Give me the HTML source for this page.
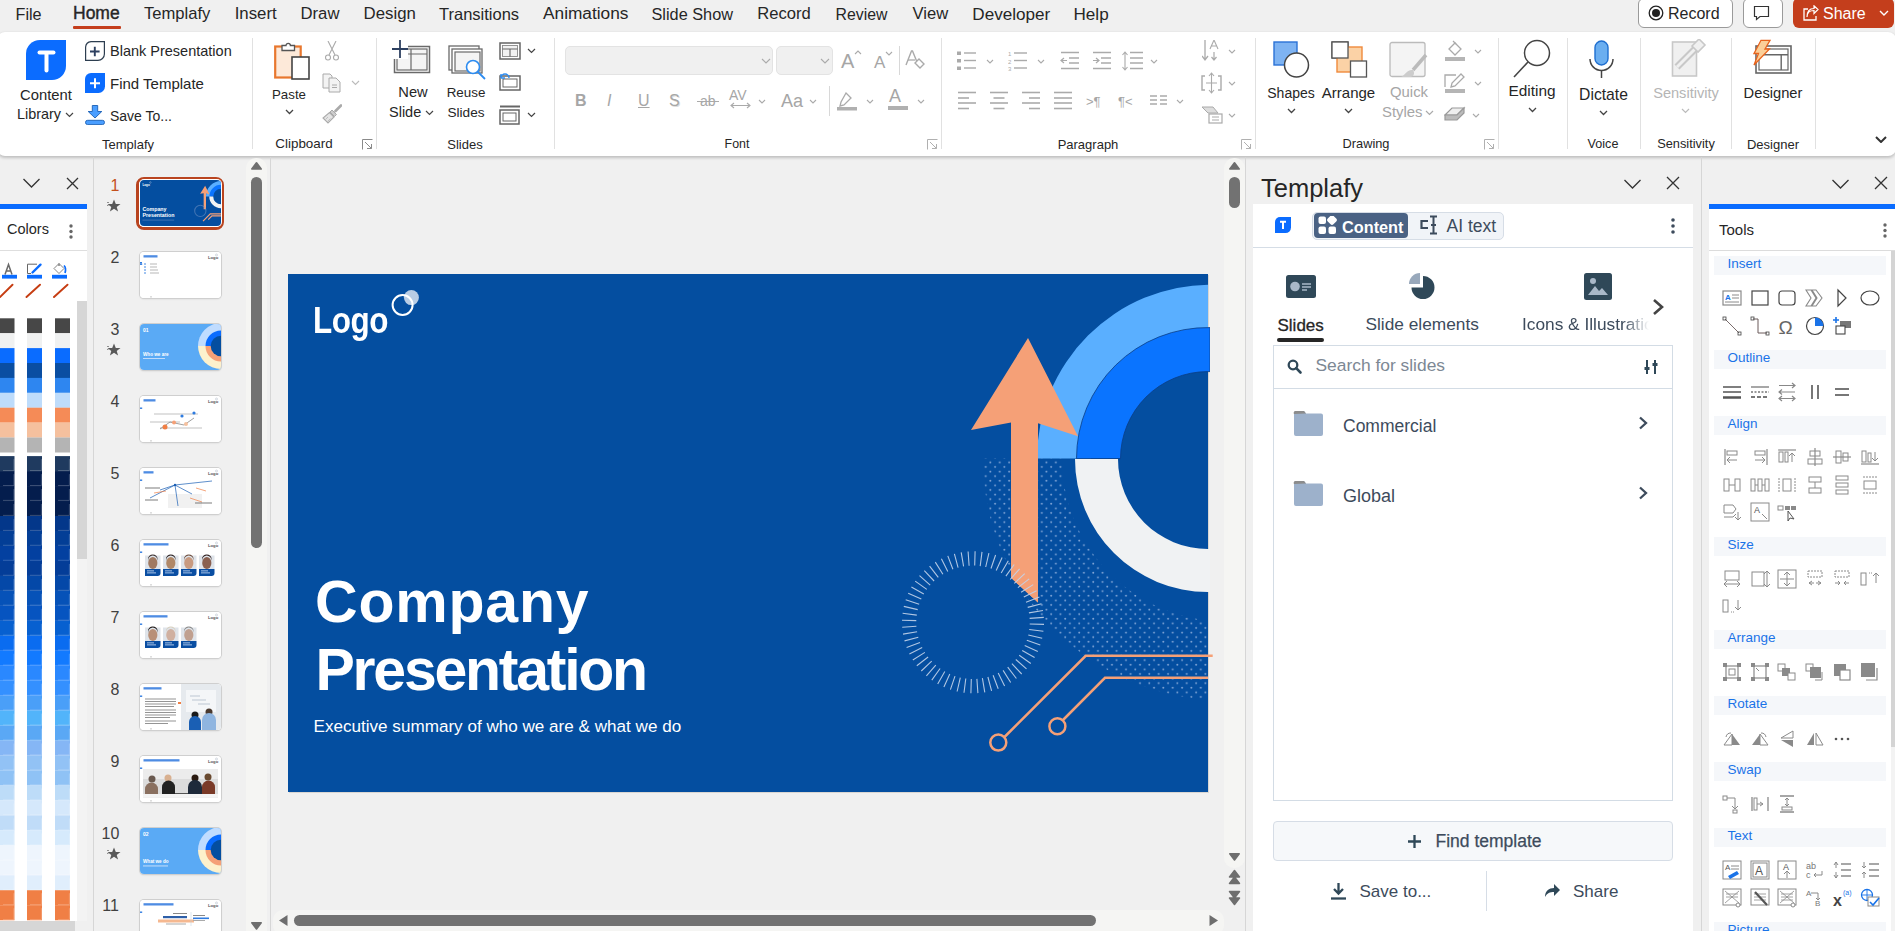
<!DOCTYPE html><html><head><meta charset="utf-8"><style>
html,body{margin:0;padding:0;width:1895px;height:931px;overflow:hidden;background:#f0f0f0;font-family:"Liberation Sans",sans-serif;}
.t{position:absolute;line-height:1;white-space:nowrap;}
#root{position:relative;width:1895px;height:931px;overflow:hidden;}
</style></head><body><div id="root">
<div class="t" style="left:15.5px;top:6.3px;font-size:16.2px;color:#262626;">File</div>
<div class="t" style="left:73.0px;top:5.2px;font-size:17.5px;color:#262626;-webkit-text-stroke:0.4px #262626;">Home</div>
<div class="t" style="left:144.0px;top:5.9px;font-size:16.6px;color:#262626;">Templafy</div>
<div class="t" style="left:234.7px;top:5.8px;font-size:16.8px;color:#262626;">Insert</div>
<div class="t" style="left:300.5px;top:5.9px;font-size:16.7px;color:#262626;">Draw</div>
<div class="t" style="left:363.6px;top:5.8px;font-size:16.8px;color:#262626;">Design</div>
<div class="t" style="left:439.0px;top:6.0px;font-size:16.5px;color:#262626;">Transitions</div>
<div class="t" style="left:543.0px;top:5.4px;font-size:17.3px;color:#262626;">Animations</div>
<div class="t" style="left:651.5px;top:6.2px;font-size:16.3px;color:#262626;">Slide Show</div>
<div class="t" style="left:757.2px;top:5.9px;font-size:16.6px;color:#262626;">Record</div>
<div class="t" style="left:835.6px;top:6.6px;font-size:15.8px;color:#262626;">Review</div>
<div class="t" style="left:912.5px;top:5.9px;font-size:16.6px;color:#262626;">View</div>
<div class="t" style="left:972.3px;top:5.5px;font-size:17.1px;color:#262626;">Developer</div>
<div class="t" style="left:1073.5px;top:5.5px;font-size:17.1px;color:#262626;">Help</div>
<div style="position:absolute;left:73px;top:26px;width:48px;height:3px;background:#c43e1c;border-radius:1px;"></div>
<div style="position:absolute;left:-3px;top:32px;width:1899px;height:124px;background:#fff;border-radius:8px;box-shadow:0 1.5px 3px rgba(0,0,0,.2);"></div>
<div style="position:absolute;left:0px;top:204px;width:87px;height:5px;background:#0a6cff;"></div>
<div style="position:absolute;left:0px;top:209px;width:87px;height:722px;background:#fff;"></div>
<div style="position:absolute;left:93px;top:157px;width:1px;height:774px;background:#d6d6d6;"></div>
<div style="position:absolute;left:246px;top:158px;width:21px;height:790px;background:#f5f5f3;border-radius:10px;"></div>
<div style="position:absolute;left:270px;top:157px;width:1px;height:774px;background:#d6d6d6;"></div>
<div style="position:absolute;left:288px;top:274px;width:920px;height:518px;background:#044ea0;"></div>
<div style="position:absolute;left:1245px;top:157px;width:1px;height:774px;background:#d6d6d6;"></div>
<div style="position:absolute;left:1253px;top:204px;width:440px;height:727px;background:#fff;"></div>
<div style="position:absolute;left:1701px;top:157px;width:1px;height:774px;background:#d6d6d6;"></div>
<div style="position:absolute;left:1709px;top:204px;width:186px;height:5px;background:#0a6cff;"></div>
<div style="position:absolute;left:1709px;top:209px;width:186px;height:722px;background:#fff;"></div>
<div class="t" style="left:1261.0px;top:175.9px;font-size:25.5px;color:#262626;">Templafy</div>
<div class="t" style="left:1719.0px;top:222.0px;font-size:15px;color:#262626;">Tools</div>
<div class="t" style="left:7.0px;top:222.3px;font-size:14.5px;color:#262626;">Colors</div>
<div style="position:absolute;left:252px;top:38px;width:1px;height:111px;background:#e1e1e1;"></div>
<div style="position:absolute;left:376px;top:38px;width:1px;height:111px;background:#e1e1e1;"></div>
<div style="position:absolute;left:554px;top:38px;width:1px;height:111px;background:#e1e1e1;"></div>
<div style="position:absolute;left:941px;top:38px;width:1px;height:111px;background:#e1e1e1;"></div>
<div style="position:absolute;left:1255px;top:38px;width:1px;height:111px;background:#e1e1e1;"></div>
<div style="position:absolute;left:1498px;top:38px;width:1px;height:111px;background:#e1e1e1;"></div>
<div style="position:absolute;left:1567px;top:38px;width:1px;height:111px;background:#e1e1e1;"></div>
<div style="position:absolute;left:1640px;top:38px;width:1px;height:111px;background:#e1e1e1;"></div>
<div style="position:absolute;left:1731px;top:38px;width:1px;height:111px;background:#e1e1e1;"></div>
<div style="position:absolute;left:1815px;top:38px;width:1px;height:111px;background:#e1e1e1;"></div>
<div class="t" style="left:128.0px;top:137.5px;font-size:13px;color:#262626;transform:translateX(-50%);">Templafy</div>
<div class="t" style="left:304.0px;top:137.2px;font-size:13.4px;color:#262626;transform:translateX(-50%);">Clipboard</div>
<div class="t" style="left:465.0px;top:137.5px;font-size:13px;color:#262626;transform:translateX(-50%);">Slides</div>
<div class="t" style="left:737.0px;top:138.0px;font-size:12.4px;color:#262626;transform:translateX(-50%);">Font</div>
<div class="t" style="left:1088.0px;top:137.5px;font-size:13px;color:#262626;transform:translateX(-50%);">Paragraph</div>
<div class="t" style="left:1366.0px;top:137.7px;font-size:12.8px;color:#262626;transform:translateX(-50%);">Drawing</div>
<div class="t" style="left:1603.0px;top:137.8px;font-size:12.6px;color:#262626;transform:translateX(-50%);">Voice</div>
<div class="t" style="left:1686.0px;top:137.7px;font-size:12.8px;color:#262626;transform:translateX(-50%);">Sensitivity</div>
<div class="t" style="left:1773.0px;top:137.5px;font-size:13px;color:#262626;transform:translateX(-50%);">Designer</div>
<svg style="position:absolute;left:362px;top:139px;" width="11" height="11" viewBox="0 0 11 11"><path d="M0.5 10.5V0.5H10.5" fill="none" stroke="#8a8a8a" stroke-width="1"/><path d="M3 3L9.5 9.5M9.5 5V9.5H5" fill="none" stroke="#8a8a8a" stroke-width="1"/></svg>
<svg style="position:absolute;left:927px;top:139px;" width="11" height="11" viewBox="0 0 11 11"><path d="M0.5 10.5V0.5H10.5" fill="none" stroke="#b0b0b0" stroke-width="1"/><path d="M3 3L9.5 9.5M9.5 5V9.5H5" fill="none" stroke="#b0b0b0" stroke-width="1"/></svg>
<svg style="position:absolute;left:1241px;top:139px;" width="11" height="11" viewBox="0 0 11 11"><path d="M0.5 10.5V0.5H10.5" fill="none" stroke="#b0b0b0" stroke-width="1"/><path d="M3 3L9.5 9.5M9.5 5V9.5H5" fill="none" stroke="#b0b0b0" stroke-width="1"/></svg>
<svg style="position:absolute;left:1484px;top:139px;" width="11" height="11" viewBox="0 0 11 11"><path d="M0.5 10.5V0.5H10.5" fill="none" stroke="#b0b0b0" stroke-width="1"/><path d="M3 3L9.5 9.5M9.5 5V9.5H5" fill="none" stroke="#b0b0b0" stroke-width="1"/></svg>
<svg style="position:absolute;left:26px;top:40px;" width="40" height="40" viewBox="0 0 40 40"><path d="M14 0H40V26A14 14 0 0 1 26 40H0V14A14 14 0 0 1 14 0Z" fill="#0b6cff"/><path d="M13.5 12.5H27.5" stroke="#fff" stroke-width="4" stroke-linecap="round"/><path d="M20.5 13V30.5" stroke="#fff" stroke-width="4" stroke-linecap="round"/></svg>
<div class="t" style="left:46.0px;top:87.5px;font-size:14.8px;color:#262626;transform:translateX(-50%);">Content</div>
<div class="t" style="left:17.0px;top:107.3px;font-size:14.4px;color:#262626;">Library</div>
<svg style="position:absolute;left:64.5px;top:112.25px;" width="9" height="5.5" viewBox="0 0 9 5.5"><polyline points="1,1 4.5,4.5 8,1" fill="none" stroke="#444" stroke-width="1.2"/></svg>
<svg style="position:absolute;left:85px;top:41px;" width="20" height="20" viewBox="0 0 20 20"><path d="M6 0.6H19.4V13A6.4 6.4 0 0 1 13 19.4H0.6V6A6 6 0 0 1 6 0.6Z" fill="#fff" stroke="#2d3e50" stroke-width="1.2"/><path d="M5 10.5H14.6M9.8 5.7V15.3" stroke="#2d4060" stroke-width="1.9"/></svg>
<div class="t" style="left:110.0px;top:44.2px;font-size:14.5px;color:#262626;">Blank Presentation</div>
<svg style="position:absolute;left:85px;top:73px;" width="20" height="20" viewBox="0 0 20 20"><path d="M6 0H20V13.5A6.5 6.5 0 0 1 13.5 20H0V6A6 6 0 0 1 6 0Z" fill="#0b6cff"/><path d="M5 10.2H15M10 5.2V15.2" stroke="#fff" stroke-width="2"/></svg>
<div class="t" style="left:110.0px;top:76.0px;font-size:15px;color:#262626;">Find Template</div>
<svg style="position:absolute;left:85px;top:105px;" width="20" height="20" viewBox="0 0 20 20"><path d="M7.3 0.5H12.7V6.5H16.8L10 13L3.2 6.5H7.3Z" fill="#4a9eff" stroke="#1a5fb4" stroke-width="0.9"/><rect x="0.5" y="15.3" width="19" height="4.3" rx="2.1" fill="#4a9eff" stroke="#1a5fb4" stroke-width="0.9"/></svg>
<div class="t" style="left:110.0px;top:108.9px;font-size:14px;color:#262626;">Save To...</div>
<svg style="position:absolute;left:274px;top:41px;" width="37" height="40" viewBox="0 0 37 40"><rect x="1.2" y="5.5" width="25.5" height="31" fill="#fde9d9" stroke="#e8772e" stroke-width="2.2"/><path d="M8 9.5V4.5H12A2.2 2.2 0 0 1 16.4 4.5H20.5V9.5Z" fill="#fff" stroke="#555" stroke-width="1.3"/><rect x="18" y="16" width="17" height="22" fill="#fff" stroke="#444" stroke-width="1.6"/></svg>
<div class="t" style="left:289.0px;top:88.2px;font-size:13.3px;color:#262626;transform:translateX(-50%);">Paste</div>
<svg style="position:absolute;left:284.5px;top:109.25px;" width="9" height="5.5" viewBox="0 0 9 5.5"><polyline points="1,1 4.5,4.5 8,1" fill="none" stroke="#444" stroke-width="1.3"/></svg>
<svg style="position:absolute;left:324px;top:41px;" width="16" height="20" viewBox="0 0 16 20"><path d="M4 0L11 14M12 0L5 14" stroke="#aaa" stroke-width="1.1" fill="none"/><circle cx="4" cy="16.5" r="2.5" fill="none" stroke="#aaa" stroke-width="1.1"/><circle cx="12" cy="16.5" r="2.5" fill="none" stroke="#aaa" stroke-width="1.1"/></svg>
<svg style="position:absolute;left:322px;top:73px;" width="20" height="20" viewBox="0 0 20 20"><path d="M1 1H8L10 3V15H1Z" fill="#f3f3f3" stroke="#aaa" stroke-width="1"/><path d="M7 5H14L18 9V19H7Z" fill="#f3f3f3" stroke="#aaa" stroke-width="1"/><path d="M10 12H15M10 14.5H15" stroke="#aaa" stroke-width="1"/></svg>
<svg style="position:absolute;left:350.5px;top:80.25px;" width="9" height="5.5" viewBox="0 0 9 5.5"><polyline points="1,1 4.5,4.5 8,1" fill="none" stroke="#bbb" stroke-width="1.1"/></svg>
<svg style="position:absolute;left:322px;top:104px;" width="20" height="20" viewBox="0 0 20 20"><path d="M19 1.5L13.5 7" stroke="#aaa" stroke-width="2.6" stroke-linecap="round"/><path d="M10 6L14.5 10.5L12.5 12.5L8 8Z" fill="#ccc" stroke="#aaa" stroke-width="1"/><path d="M7.5 8.5L12 13L6 19L1 14Z" fill="#e4e4e4" stroke="#aaa" stroke-width="1.1"/><path d="M3.5 15.5L6 13M5.5 17.5L8.5 14.5" stroke="#bbb" stroke-width="0.9"/></svg>
<svg style="position:absolute;left:392px;top:40px;" width="40" height="35" viewBox="0 0 40 35"><rect x="2.5" y="6.5" width="35" height="26" fill="#fff" stroke="#6a6a6a" stroke-width="1.5"/><rect x="5" y="9" width="30" height="21" fill="#f4f4f4" stroke="#6a6a6a" stroke-width="1.2"/><path d="M19 9V30M5 14H35" stroke="#6a6a6a" stroke-width="1.2"/><rect x="0" y="5" width="16" height="14" fill="#fff"/><path d="M8 0V18M0 9H16" stroke="#2d4060" stroke-width="1.8"/></svg>
<div class="t" style="left:413.0px;top:84.6px;font-size:14.7px;color:#262626;transform:translateX(-50%);">New</div>
<div class="t" style="left:389.0px;top:105.2px;font-size:14.5px;color:#262626;">Slide</div>
<svg style="position:absolute;left:424.5px;top:110.25px;" width="9" height="5.5" viewBox="0 0 9 5.5"><polyline points="1,1 4.5,4.5 8,1" fill="none" stroke="#444" stroke-width="1.2"/></svg>
<svg style="position:absolute;left:448px;top:45px;" width="40" height="36" viewBox="0 0 40 36"><rect x="1" y="1" width="30" height="24" fill="none" stroke="#6a6a6a" stroke-width="1.3"/><rect x="4" y="4" width="30" height="24" fill="#fff" stroke="#6a6a6a" stroke-width="1.3"/><rect x="7" y="7" width="25" height="19" fill="#f4f4f4" stroke="#6a6a6a" stroke-width="1.2"/><circle cx="25" cy="22" r="6.5" fill="#fff" stroke="#2d8cf0" stroke-width="1.6"/><path d="M29.5 26.5L37 34" stroke="#2d8cf0" stroke-width="1.8"/></svg>
<div class="t" style="left:466.0px;top:85.7px;font-size:13.4px;color:#262626;transform:translateX(-50%);">Reuse</div>
<div class="t" style="left:466.0px;top:106.0px;font-size:13.6px;color:#262626;transform:translateX(-50%);">Slides</div>
<svg style="position:absolute;left:499px;top:42px;" width="22" height="18" viewBox="0 0 22 18"><rect x="1" y="1" width="20" height="16" fill="#fff" stroke="#666" stroke-width="1.5"/><rect x="3.5" y="3.5" width="15" height="11" fill="#f2f2f2" stroke="#888" stroke-width="0.9"/><path d="M3.5 7H18.5M11 7V14.5" stroke="#666" stroke-width="1.1"/></svg>
<svg style="position:absolute;left:526.5px;top:48.25px;" width="9" height="5.5" viewBox="0 0 9 5.5"><polyline points="1,1 4.5,4.5 8,1" fill="none" stroke="#444" stroke-width="1.2"/></svg>
<svg style="position:absolute;left:499px;top:73px;" width="22" height="18" viewBox="0 0 22 18"><rect x="1" y="3" width="20" height="14" fill="#fff" stroke="#666" stroke-width="1.5"/><rect x="4" y="6" width="14" height="8" fill="#fff" stroke="#666" stroke-width="1"/><path d="M10 5A4 4 0 0 0 2 5M2 5L2 1M2 5H6" fill="none" stroke="#2d8cf0" stroke-width="1.4"/></svg>
<svg style="position:absolute;left:499px;top:105px;" width="22" height="20" viewBox="0 0 22 20"><path d="M1 1.5H21" stroke="#666" stroke-width="2"/><rect x="1" y="5" width="19" height="14" fill="#fff" stroke="#666" stroke-width="1.5"/><rect x="4" y="8" width="13" height="8" fill="#fff" stroke="#666" stroke-width="1"/></svg>
<svg style="position:absolute;left:526.5px;top:112.25px;" width="9" height="5.5" viewBox="0 0 9 5.5"><polyline points="1,1 4.5,4.5 8,1" fill="none" stroke="#444" stroke-width="1.2"/></svg>
<div style="position:absolute;left:565px;top:46px;width:208px;height:29px;background:#f0f0f0;border:1px solid #e3e3e3;border-radius:5px;box-sizing:border-box;"></div>
<div style="position:absolute;left:776px;top:46px;width:57px;height:29px;background:#f0f0f0;border:1px solid #e3e3e3;border-radius:5px;box-sizing:border-box;"></div>
<svg style="position:absolute;left:761.0px;top:58.0px;" width="10" height="6.0" viewBox="0 0 10 6.0"><polyline points="1,1 5.0,5.0 9,1" fill="none" stroke="#aaa" stroke-width="1.1"/></svg>
<svg style="position:absolute;left:820.0px;top:58.0px;" width="10" height="6.0" viewBox="0 0 10 6.0"><polyline points="1,1 5.0,5.0 9,1" fill="none" stroke="#aaa" stroke-width="1.1"/></svg>
<div class="t" style="left:841.0px;top:51.1px;font-size:20px;color:#a6a6a6;">A</div>
<svg style="position:absolute;left:854px;top:50px;" width="8" height="5" viewBox="0 0 8 5"><polyline points="1,4 4,1 7,4" fill="none" stroke="#aaa" stroke-width="1.1"/></svg>
<div class="t" style="left:874.0px;top:53.6px;font-size:17px;color:#a6a6a6;">A</div>
<svg style="position:absolute;left:885.0px;top:51.0px;" width="8" height="5.0" viewBox="0 0 8 5.0"><polyline points="1,1 4.0,4.0 7,1" fill="none" stroke="#aaa" stroke-width="1.1"/></svg>
<div style="position:absolute;left:899px;top:46px;width:1px;height:29px;background:#d8d8d8;"></div>
<svg style="position:absolute;left:905px;top:50px;" width="24" height="20" viewBox="0 0 24 20"><path d="M1 15L6.5 1H7.5L12 12" fill="none" stroke="#aaa" stroke-width="1.4"/><path d="M3 10H10" stroke="#aaa" stroke-width="1.3"/><path d="M14 9L19 14L15 18L10 13Z" fill="#fff" stroke="#aaa" stroke-width="1.4"/></svg>
<div class="t" style="left:575.0px;top:92.5px;font-size:16px;color:#a6a6a6;"><b>B</b></div>
<div class="t" style="left:607.0px;top:92.5px;font-size:16px;color:#a6a6a6;"><i>I</i></div>
<div class="t" style="left:638.0px;top:92.5px;font-size:16px;color:#a6a6a6;"><u>U</u></div>
<div class="t" style="left:669.0px;top:92.5px;font-size:16px;color:#a6a6a6;text-shadow:1px 1px 0 #ddd;">S</div>
<div class="t" style="left:700.0px;top:94.1px;font-size:14px;color:#a6a6a6;">ab</div>
<div style="position:absolute;left:697px;top:101px;width:22px;height:1px;background:#aaa;"></div>
<div class="t" style="left:729.0px;top:88.1px;font-size:14px;color:#a6a6a6;">AV</div>
<svg style="position:absolute;left:730px;top:102px;" width="21" height="7" viewBox="0 0 21 7"><path d="M1 3.5H20M4 1L1 3.5L4 6M17 1L20 3.5L17 6" fill="none" stroke="#aaa" stroke-width="1.1"/></svg>
<svg style="position:absolute;left:758.0px;top:98.5px;" width="8" height="5.0" viewBox="0 0 8 5.0"><polyline points="1,1 4.0,4.0 7,1" fill="none" stroke="#aaa" stroke-width="1.1"/></svg>
<div class="t" style="left:781.0px;top:91.8px;font-size:18px;color:#a6a6a6;">Aa</div>
<svg style="position:absolute;left:809.0px;top:98.5px;" width="8" height="5.0" viewBox="0 0 8 5.0"><polyline points="1,1 4.0,4.0 7,1" fill="none" stroke="#aaa" stroke-width="1.1"/></svg>
<div style="position:absolute;left:829px;top:86px;width:1px;height:30px;background:#d8d8d8;"></div>
<svg style="position:absolute;left:836px;top:91px;" width="22" height="20" viewBox="0 0 22 20"><path d="M10 2L15 7L8 14L4 15L5 11Z" fill="#fff" stroke="#aaa" stroke-width="1.3"/><rect x="1" y="16" width="20" height="3.5" fill="#b0b0b0"/></svg>
<svg style="position:absolute;left:866.0px;top:98.5px;" width="8" height="5.0" viewBox="0 0 8 5.0"><polyline points="1,1 4.0,4.0 7,1" fill="none" stroke="#aaa" stroke-width="1.1"/></svg>
<div class="t" style="left:889.0px;top:86.8px;font-size:18px;color:#a6a6a6;">A</div>
<div style="position:absolute;left:888px;top:106px;width:20px;height:3.5px;background:#b0b0b0;"></div>
<svg style="position:absolute;left:917.0px;top:98.5px;" width="8" height="5.0" viewBox="0 0 8 5.0"><polyline points="1,1 4.0,4.0 7,1" fill="none" stroke="#aaa" stroke-width="1.1"/></svg>
<svg style="position:absolute;left:957px;top:51px;" width="22" height="20" viewBox="0 0 22 20"><rect x="0" y="0.5" width="4" height="3.5" fill="#aaa"/><path d="M7 2H19" stroke="#aaa" stroke-width="1.4"/><rect x="0" y="8.0" width="4" height="3.5" fill="#aaa"/><path d="M7 9.5H19" stroke="#aaa" stroke-width="1.4"/><rect x="0" y="15.5" width="4" height="3.5" fill="#aaa"/><path d="M7 17H19" stroke="#aaa" stroke-width="1.4"/></svg>
<svg style="position:absolute;left:986.0px;top:58.5px;" width="8" height="5.0" viewBox="0 0 8 5.0"><polyline points="1,1 4.0,4.0 7,1" fill="none" stroke="#aaa" stroke-width="1.1"/></svg>
<svg style="position:absolute;left:1008px;top:51px;" width="22" height="20" viewBox="0 0 22 20"><text x="0" y="5" font-size="6" fill="#aaa" font-family="Liberation Sans">1</text><path d="M6 2H19" stroke="#aaa" stroke-width="1.4"/><text x="0" y="12.5" font-size="6" fill="#aaa" font-family="Liberation Sans">2</text><path d="M6 9.5H19" stroke="#aaa" stroke-width="1.4"/><text x="0" y="20" font-size="6" fill="#aaa" font-family="Liberation Sans">3</text><path d="M6 17H19" stroke="#aaa" stroke-width="1.4"/></svg>
<svg style="position:absolute;left:1037.0px;top:58.5px;" width="8" height="5.0" viewBox="0 0 8 5.0"><polyline points="1,1 4.0,4.0 7,1" fill="none" stroke="#aaa" stroke-width="1.1"/></svg>
<svg style="position:absolute;left:1060px;top:51px;" width="22" height="20" viewBox="0 0 22 20"><path d="M1 1.5H19M9 7H19M9 12H19M1 17.5H19" stroke="#aaa" stroke-width="1.4"/><path d="M7 9.5H1M4 7L1 9.5L4 12" fill="none" stroke="#aaa" stroke-width="1.2"/></svg>
<svg style="position:absolute;left:1092px;top:51px;" width="22" height="20" viewBox="0 0 22 20"><path d="M1 1.5H19M9 7H19M9 12H19M1 17.5H19" stroke="#aaa" stroke-width="1.4"/><path d="M1 9.5H7M4 7L7 9.5L4 12" fill="none" stroke="#aaa" stroke-width="1.2"/></svg>
<svg style="position:absolute;left:1122px;top:51px;" width="22" height="20" viewBox="0 0 22 20"><path d="M8 1.5H21M8 7H21M8 12H21M8 17.5H21" stroke="#aaa" stroke-width="1.4"/><path d="M3 1V19M0.5 4L3 1L5.5 4M0.5 16L3 19L5.5 16" fill="none" stroke="#aaa" stroke-width="1.1"/></svg>
<svg style="position:absolute;left:1150.0px;top:58.5px;" width="8" height="5.0" viewBox="0 0 8 5.0"><polyline points="1,1 4.0,4.0 7,1" fill="none" stroke="#aaa" stroke-width="1.1"/></svg>
<svg style="position:absolute;left:958px;top:91px;" width="22" height="20" viewBox="0 0 22 20"><path d="M0 1.5H18" stroke="#aaa" stroke-width="1.6"/><path d="M0 7H11" stroke="#aaa" stroke-width="1.6"/><path d="M0 12H18" stroke="#aaa" stroke-width="1.6"/><path d="M0 17.5H11" stroke="#aaa" stroke-width="1.6"/></svg>
<svg style="position:absolute;left:990px;top:91px;" width="22" height="20" viewBox="0 0 22 20"><path d="M0 1.5H18" stroke="#aaa" stroke-width="1.6"/><path d="M3.5 7H14.5" stroke="#aaa" stroke-width="1.6"/><path d="M0 12H18" stroke="#aaa" stroke-width="1.6"/><path d="M3.5 17.5H14.5" stroke="#aaa" stroke-width="1.6"/></svg>
<svg style="position:absolute;left:1022px;top:91px;" width="22" height="20" viewBox="0 0 22 20"><path d="M0 1.5H18" stroke="#aaa" stroke-width="1.6"/><path d="M7 7H18" stroke="#aaa" stroke-width="1.6"/><path d="M0 12H18" stroke="#aaa" stroke-width="1.6"/><path d="M7 17.5H18" stroke="#aaa" stroke-width="1.6"/></svg>
<svg style="position:absolute;left:1054px;top:91px;" width="22" height="20" viewBox="0 0 22 20"><path d="M0 1.5H18" stroke="#aaa" stroke-width="1.6"/><path d="M0 7H18" stroke="#aaa" stroke-width="1.6"/><path d="M0 12H18" stroke="#aaa" stroke-width="1.6"/><path d="M0 17.5H18" stroke="#aaa" stroke-width="1.6"/></svg>
<div class="t" style="left:1086.0px;top:95.0px;font-size:13px;color:#a6a6a6;">&gt;¶</div>
<div class="t" style="left:1118.0px;top:95.0px;font-size:13px;color:#a6a6a6;">¶&lt;</div>
<svg style="position:absolute;left:1150px;top:95px;" width="18" height="10" viewBox="0 0 18 10"><path d="M0 1H7M0 5H7M0 9H7M10 1H17M10 5H17M10 9H17" stroke="#aaa" stroke-width="1.4"/></svg>
<svg style="position:absolute;left:1176.0px;top:98.5px;" width="8" height="5.0" viewBox="0 0 8 5.0"><polyline points="1,1 4.0,4.0 7,1" fill="none" stroke="#aaa" stroke-width="1.1"/></svg>
<svg style="position:absolute;left:1202px;top:40px;" width="20" height="22" viewBox="0 0 20 22"><path d="M3 0V20M0 16L3 20L6 16" fill="none" stroke="#aaa" stroke-width="1.3"/><path d="M12 12V20M9.5 17L12 20L14.5 17" fill="none" stroke="#aaa" stroke-width="1.2"/><path d="M8 9L12 0L16 9M9.5 6H14.5" fill="none" stroke="#aaa" stroke-width="1.1"/></svg>
<svg style="position:absolute;left:1228.0px;top:48.5px;" width="8" height="5.0" viewBox="0 0 8 5.0"><polyline points="1,1 4.0,4.0 7,1" fill="none" stroke="#aaa" stroke-width="1.1"/></svg>
<svg style="position:absolute;left:1201px;top:72px;" width="21" height="22" viewBox="0 0 21 22"><path d="M4 4H1V18H4M17 4H20V18H17" fill="none" stroke="#aaa" stroke-width="1.4"/><path d="M10.5 1V21M8 4L10.5 1L13 4M8 18L10.5 21L13 18M5 11H16" fill="none" stroke="#aaa" stroke-width="1.1"/></svg>
<svg style="position:absolute;left:1228.0px;top:80.5px;" width="8" height="5.0" viewBox="0 0 8 5.0"><polyline points="1,1 4.0,4.0 7,1" fill="none" stroke="#aaa" stroke-width="1.1"/></svg>
<svg style="position:absolute;left:1201px;top:106px;" width="22" height="18" viewBox="0 0 22 18"><path d="M1 1H12L17 7H7Z" fill="#ddd" stroke="#aaa" stroke-width="1"/><rect x="8" y="8" width="13" height="9" fill="#fff" stroke="#aaa" stroke-width="1.2"/><path d="M11 11H18M11 14H18" stroke="#aaa" stroke-width="1"/></svg>
<svg style="position:absolute;left:1228.0px;top:112.5px;" width="8" height="5.0" viewBox="0 0 8 5.0"><polyline points="1,1 4.0,4.0 7,1" fill="none" stroke="#aaa" stroke-width="1.1"/></svg>
<svg style="position:absolute;left:1273px;top:41px;" width="37" height="38" viewBox="0 0 37 38"><rect x="1" y="1" width="23" height="23" fill="#7eb3f2" stroke="#2b72d6" stroke-width="1.4"/><circle cx="23.5" cy="24" r="12" fill="#fff" stroke="#444" stroke-width="1.5"/></svg>
<div class="t" style="left:1291.0px;top:86.1px;font-size:14px;color:#262626;transform:translateX(-50%);">Shapes</div>
<svg style="position:absolute;left:1286.5px;top:108.25px;" width="9" height="5.5" viewBox="0 0 9 5.5"><polyline points="1,1 4.5,4.5 8,1" fill="none" stroke="#444" stroke-width="1.3"/></svg>
<svg style="position:absolute;left:1331px;top:41px;" width="37" height="38" viewBox="0 0 37 38"><rect x="1" y="1" width="16" height="16" fill="#fff" stroke="#555" stroke-width="1.3"/><rect x="6" y="6" width="25" height="25" fill="#fbd2a6" stroke="#f08a3c" stroke-width="1.4"/><rect x="1" y="1" width="16" height="16" fill="#fff" stroke="#555" stroke-width="1.3"/><rect x="19.5" y="20" width="16" height="16" fill="#fff" stroke="#555" stroke-width="1.3"/></svg>
<div class="t" style="left:1348.5px;top:85.3px;font-size:15px;color:#262626;transform:translateX(-50%);">Arrange</div>
<svg style="position:absolute;left:1343.5px;top:108.25px;" width="9" height="5.5" viewBox="0 0 9 5.5"><polyline points="1,1 4.5,4.5 8,1" fill="none" stroke="#444" stroke-width="1.3"/></svg>
<svg style="position:absolute;left:1389px;top:41px;" width="40" height="38" viewBox="0 0 40 38"><rect x="1" y="1.5" width="35" height="34" rx="2" fill="#f4f4f4" stroke="#bbb" stroke-width="1.3"/><path d="M37 14L24 29" stroke="#bbb" stroke-width="3.5"/><path d="M22 29C17 30 16 34 12 36H22C25 35 26 32 24 29Z" fill="#ccc"/></svg>
<div class="t" style="left:1409.0px;top:85.4px;font-size:14.9px;color:#a6a6a6;transform:translateX(-50%);">Quick</div>
<div class="t" style="left:1382.0px;top:105.4px;font-size:14.9px;color:#a6a6a6;">Styles</div>
<svg style="position:absolute;left:1424.5px;top:110.25px;" width="9" height="5.5" viewBox="0 0 9 5.5"><polyline points="1,1 4.5,4.5 8,1" fill="none" stroke="#aaa" stroke-width="1.2"/></svg>
<svg style="position:absolute;left:1444px;top:40px;" width="22" height="22" viewBox="0 0 22 22"><path d="M5 9L11 3L17 9L11 15Z" fill="#fff" stroke="#aaa" stroke-width="1.3"/><path d="M9 1L12 4" stroke="#aaa" stroke-width="1.3"/><rect x="1" y="17" width="20" height="4" fill="#b5b5b5"/></svg>
<svg style="position:absolute;left:1474.0px;top:48.5px;" width="8" height="5.0" viewBox="0 0 8 5.0"><polyline points="1,1 4.0,4.0 7,1" fill="none" stroke="#aaa" stroke-width="1.1"/></svg>
<svg style="position:absolute;left:1444px;top:72px;" width="22" height="22" viewBox="0 0 22 22"><path d="M1 15V3H12" fill="none" stroke="#aaa" stroke-width="1.3"/><path d="M17 2L20 5L11 14L7 15L8 11Z" fill="#fff" stroke="#aaa" stroke-width="1.3"/><rect x="1" y="17" width="20" height="4" fill="#b5b5b5"/></svg>
<svg style="position:absolute;left:1474.0px;top:80.5px;" width="8" height="5.0" viewBox="0 0 8 5.0"><polyline points="1,1 4.0,4.0 7,1" fill="none" stroke="#aaa" stroke-width="1.1"/></svg>
<svg style="position:absolute;left:1444px;top:105px;" width="22" height="18" viewBox="0 0 22 18"><path d="M1 10L8 3H20L13 10Z" fill="#eee" stroke="#999" stroke-width="1.2"/><path d="M1 10V15H13L20 8V3L13 10Z" fill="#bbb" stroke="#999" stroke-width="1.2"/></svg>
<svg style="position:absolute;left:1472.0px;top:112.5px;" width="8" height="5.0" viewBox="0 0 8 5.0"><polyline points="1,1 4.0,4.0 7,1" fill="none" stroke="#aaa" stroke-width="1.1"/></svg>
<svg style="position:absolute;left:1512px;top:39px;" width="40" height="40" viewBox="0 0 40 40"><circle cx="25" cy="14" r="12.5" fill="#fff" stroke="#444" stroke-width="1.5"/><path d="M16 23L2 38" stroke="#444" stroke-width="1.6"/></svg>
<div class="t" style="left:1532.0px;top:83.0px;font-size:15.4px;color:#262626;transform:translateX(-50%);">Editing</div>
<svg style="position:absolute;left:1527.5px;top:107.25px;" width="9" height="5.5" viewBox="0 0 9 5.5"><polyline points="1,1 4.5,4.5 8,1" fill="none" stroke="#444" stroke-width="1.3"/></svg>
<svg style="position:absolute;left:1588px;top:40px;" width="28" height="40" viewBox="0 0 28 40"><rect x="7" y="1" width="13" height="24" rx="6.5" fill="#6aaef0" stroke="#1f6fd0" stroke-width="1.4"/><path d="M2 19A11.5 11.5 0 0 0 25 19" fill="none" stroke="#444" stroke-width="1.5"/><path d="M13.5 30.5V38" stroke="#444" stroke-width="1.5"/></svg>
<div class="t" style="left:1603.5px;top:86.7px;font-size:15.7px;color:#262626;transform:translateX(-50%);">Dictate</div>
<svg style="position:absolute;left:1598.5px;top:110.25px;" width="9" height="5.5" viewBox="0 0 9 5.5"><polyline points="1,1 4.5,4.5 8,1" fill="none" stroke="#444" stroke-width="1.3"/></svg>
<svg style="position:absolute;left:1671px;top:39px;" width="36" height="40" viewBox="0 0 36 40"><path d="M1 3H12V36H1Z" fill="#f0f0f0"/><rect x="1.5" y="3" width="24" height="34" fill="#f0f0f0" stroke="#c8c8c8" stroke-width="1.6"/><path d="M6 28L24 10" stroke="#c8c8c8" stroke-width="7"/><path d="M6 28L24 10" stroke="#f0f0f0" stroke-width="3"/><path d="M21 7L28 0L34 6L27 13Z" fill="#f0f0f0" stroke="#c8c8c8" stroke-width="1.6"/></svg>
<div class="t" style="left:1686.0px;top:85.6px;font-size:14.6px;color:#b5b5b5;transform:translateX(-50%);">Sensitivity</div>
<svg style="position:absolute;left:1680.5px;top:108.25px;" width="9" height="5.5" viewBox="0 0 9 5.5"><polyline points="1,1 4.5,4.5 8,1" fill="none" stroke="#bbb" stroke-width="1.2"/></svg>
<svg style="position:absolute;left:1753px;top:39px;" width="40" height="36" viewBox="0 0 40 36"><rect x="3" y="7" width="35" height="27" fill="#fff" stroke="#666" stroke-width="1.6"/><rect x="6" y="10" width="29" height="21" fill="#fff" stroke="#666" stroke-width="1.2"/><path d="M6 15.8H35M28.2 15.8V31" stroke="#666" stroke-width="1.4"/><path d="M8 1.3H17L12 10H16.5L1 26L5.5 14.5H1Z" fill="#fbcf98" stroke="#e8631c" stroke-width="1.3"/></svg>
<div class="t" style="left:1773.0px;top:85.6px;font-size:14.7px;color:#262626;transform:translateX(-50%);">Designer</div>
<svg style="position:absolute;left:1875.0px;top:135.5px;" width="12" height="7.0" viewBox="0 0 12 7.0"><polyline points="1,1 6.0,6.0 11,1" fill="none" stroke="#333" stroke-width="2"/></svg>
<div style="position:absolute;left:1638px;top:-2px;width:95px;height:29.5px;background:#fff;border:1px solid #9a9a9a;border-radius:6px;box-sizing:border-box;"></div>
<svg style="position:absolute;left:1648px;top:5px;" width="16" height="16" viewBox="0 0 16 16"><circle cx="8" cy="8" r="6.8" fill="#fff" stroke="#222" stroke-width="1.3"/><circle cx="8" cy="8" r="4" fill="#222"/></svg>
<div class="t" style="left:1668.0px;top:6.0px;font-size:16px;color:#262626;">Record</div>
<div style="position:absolute;left:1743px;top:-2px;width:40px;height:29.5px;background:#fff;border:1px solid #9a9a9a;border-radius:6px;box-sizing:border-box;"></div>
<svg style="position:absolute;left:1753px;top:5px;" width="18" height="16" viewBox="0 0 18 16"><path d="M1.5 1.5H15.5V11.5H7L3.5 14.5V11.5H1.5Z" fill="none" stroke="#333" stroke-width="1.2"/></svg>
<div style="position:absolute;left:1793px;top:-2px;width:101px;height:29.5px;background:#c43e1c;border-radius:6px;"></div>
<svg style="position:absolute;left:1802px;top:5px;" width="17" height="16" viewBox="0 0 17 16"><path d="M6 4H2V15H14V11" fill="none" stroke="#fff" stroke-width="1.3"/><path d="M5 12C5 7 8 5.5 12 5.5V8.5L16 4.5L12 0.8V3.5C7 3.5 5 7 5 12Z" fill="none" stroke="#fff" stroke-width="1.2"/></svg>
<div class="t" style="left:1823.0px;top:6.0px;font-size:16px;color:#fff;">Share</div>
<svg style="position:absolute;left:1879.0px;top:10.0px;" width="10" height="6.0" viewBox="0 0 10 6.0"><polyline points="1,1 5.0,5.0 9,1" fill="none" stroke="#fff" stroke-width="1.4"/></svg>
<div style="position:absolute;left:289px;top:275px;width:920px;height:518px;background:#d9d6d2;"></div>
<svg style="position:absolute;left:288px;top:274px;" width="926" height="518" viewBox="0 0 926 518">
<defs>
<pattern id="dots" x="0" y="0" width="9.35" height="9.2" patternUnits="userSpaceOnUse">
<circle cx="1.15" cy="4.3" r="0.95" fill="#9ab6e0"/><circle cx="5.825" cy="8.9" r="0.95" fill="#9ab6e0"/><circle cx="5.825" cy="-0.3" r="0.95" fill="#9ab6e0"/>
</pattern>
<clipPath id="sclip"><rect x="0" y="0" width="920" height="518"/></clipPath><clipPath id="sclip2"><rect x="0" y="0" width="922" height="518"/></clipPath>
</defs>
<rect x="0" y="0" width="920" height="518" fill="#044ea0"/>
<g clip-path="url(#sclip)">
<path d="M695 184.5A242 242 0 0 0 937 426.5L937 347.5A163 163 0 0 1 774 184.5Z" fill="url(#dots)" opacity="0.85"/>
<path d="M749 184.6A174 174 0 0 1 923 10.599999999999994L923 64.6A120 120 0 0 0 803 184.6Z" fill="#5aafff"/>
<path d="M723 328.6V148.6L683 156L740 64L790 162.3L750 149.3V328.6L723 303.8Z" fill="#f5a077"/>
</g><g clip-path="url(#sclip2)">
<path d="M788.5 184.6A131 131 0 0 1 922 53.6V97.6H919.5A87 87 0 0 0 832.5 184.6Z" fill="#0a74ff" stroke="#0a3d85" stroke-width="0.8"/>
<path d="M787 185A133 133 0 0 0 920 318H922V275H920A90 90 0 0 1 830 185Z" fill="#f0f2f3"/>
</g><g clip-path="url(#sclip)">
<path d="M723 303.8L750 328.6V290H723Z" fill="#f5a077"/>
</g>
<path d="M741.7 350.0L756.0 350.4M741.2 355.5L755.4 357.3M740.3 361.0L754.2 364.2M738.8 366.3L752.3 370.9M736.7 371.5L749.8 377.4M734.2 376.5L746.6 383.6M731.2 381.2L742.8 389.5M727.8 385.5L738.5 394.9M723.9 389.6L733.7 400.0M719.7 393.2L728.4 404.5M715.1 396.4L722.7 408.5M710.2 399.1L716.6 411.9M705.1 401.3L710.2 414.7M699.9 403.0L703.6 416.8M694.4 404.2L696.8 418.3M688.9 404.9L689.9 419.1M683.3 405.0L682.9 419.3M677.8 404.5L676.0 418.7M672.3 403.6L669.1 417.5M667.0 402.1L662.4 415.6M661.8 400.0L655.9 413.1M656.8 397.5L649.7 409.9M652.1 394.5L643.8 406.1M647.8 391.1L638.4 401.8M643.7 387.2L633.3 397.0M640.1 383.0L628.8 391.7M636.9 378.4L624.8 386.0M634.2 373.5L621.4 379.9M632.0 368.4L618.6 373.5M630.3 363.2L616.5 366.9M629.1 357.7L615.0 360.1M628.4 352.2L614.2 353.2M628.3 346.6L614.0 346.2M628.8 341.1L614.6 339.3M629.7 335.6L615.8 332.4M631.2 330.3L617.7 325.7M633.3 325.1L620.2 319.2M635.8 320.1L623.4 313.0M638.8 315.4L627.2 307.1M642.2 311.1L631.5 301.7M646.1 307.0L636.3 296.6M650.3 303.4L641.6 292.1M654.9 300.2L647.3 288.1M659.8 297.5L653.4 284.7M664.9 295.3L659.8 281.9M670.1 293.6L666.4 279.8M675.6 292.4L673.2 278.3M681.1 291.7L680.1 277.5M686.7 291.6L687.1 277.3M692.2 292.1L694.0 277.9M697.7 293.0L700.9 279.1M703.0 294.5L707.6 281.0M708.2 296.6L714.1 283.5M713.2 299.1L720.3 286.7M717.9 302.1L726.2 290.5M722.2 305.5L731.6 294.8M726.3 309.4L736.7 299.6M729.9 313.6L741.2 304.9M733.1 318.2L745.2 310.6M735.8 323.1L748.6 316.7M738.0 328.2L751.4 323.1M739.7 333.4L753.5 329.7M740.9 338.9L755.0 336.5M741.6 344.4L755.8 343.4" stroke="#c3d3ea" stroke-width="1.1" opacity="0.9"/>
<path d="M924.7 381.8H797.7L716 463.5" fill="none" stroke="#f5a077" stroke-width="2.5"/>
<circle cx="710.3" cy="468.6" r="8" fill="none" stroke="#f5a077" stroke-width="2.5"/>
<path d="M920 403.8H817L775 446" fill="none" stroke="#f5a077" stroke-width="2.5"/>
<circle cx="769.4" cy="452.3" r="8" fill="none" stroke="#f5a077" stroke-width="2.5"/>
<circle cx="114.6" cy="31" r="10" fill="none" stroke="#fff" stroke-width="2"/>
<circle cx="123.4" cy="23.6" r="7.5" fill="#fff" opacity="0.72"/>
</svg>
<div class="t" style="left:313.0px;top:302.7px;font-size:36.5px;color:#fff;font-weight:700;transform:scaleX(0.86);transform-origin:0 0;letter-spacing:-0.5px;">Logo</div>
<div class="t" style="left:315.0px;top:572.6px;font-size:59px;color:#fff;font-weight:700;letter-spacing:0.8px;">Company</div>
<div class="t" style="left:315.5px;top:641.1px;font-size:59px;color:#fff;font-weight:700;letter-spacing:-2.25px;">Presentation</div>
<div class="t" style="left:313.5px;top:717.5px;font-size:17.1px;color:#fff;">Executive summary of who we are &amp; what we do</div>
<svg style="position:absolute;left:23px;top:178px;" width="17" height="11" viewBox="0 0 17 11"><polyline points="0.5,1 8.5,9 16.5,1" fill="none" stroke="#333" stroke-width="1.3"/></svg>
<svg style="position:absolute;left:65.5px;top:177px;" width="13" height="13" viewBox="0 0 13 13"><path d="M1 1L12 12M12 1L1 12" stroke="#333" stroke-width="1.3"/></svg>
<svg style="position:absolute;left:68px;top:223.5px;" width="6" height="16" viewBox="0 0 6 16"><circle cx="3" cy="2.0" r="1.7" fill="#666"/><circle cx="3" cy="7.5" r="1.7" fill="#666"/><circle cx="3" cy="13.0" r="1.7" fill="#666"/></svg>
<div style="position:absolute;left:0px;top:250px;width:87px;height:1px;background:#dedede;"></div>
<svg style="position:absolute;left:0px;top:262px;" width="87" height="36" viewBox="0 0 87 36">
<path d="M5 12.5L8.5 2.5L12 12.5M6.2 9H10.8" fill="none" stroke="#6a6a6a" stroke-width="1.5"/>
<rect x="2" y="12.8" width="15" height="3.8" fill="#0a6cff"/>
<path d="M37 2.2H27.5V11.5H31" fill="none" stroke="#666" stroke-width="1"/><path d="M32.5 10.5L40.5 2.7" stroke="#0a6cff" stroke-width="2.4" stroke-linecap="round"/>
<rect x="27" y="12.8" width="15" height="3.8" fill="#0a6cff"/>
<path d="M54 6.5L59 1.5L64 6.5L59 11.5Z" fill="#fff" stroke="#777" stroke-width="0.9"/><path d="M59 1.5V4" stroke="#888" stroke-width="1.6"/><path d="M64 3.5Q66.5 6 65 11" fill="none" stroke="#0a6cff" stroke-width="1.7"/>
<rect x="52" y="12.8" width="15" height="3.8" fill="#0a6cff"/>
<path d="M0 35L12.5 22.7M26.5 35L40 22.7M54 35L67.5 22.7" stroke="#c63d12" stroke-width="1.9" stroke-linecap="round"/>
</svg>
<svg style="position:absolute;left:0px;top:318px;" width="75" height="603" viewBox="0 0 75 603"><rect x="0" y="0.30" width="14.5" height="15.00" fill="#474747"/><rect x="27" y="0.30" width="15" height="15.00" fill="#474747"/><rect x="55" y="0.30" width="15" height="15.00" fill="#474747"/><rect x="0" y="15.20" width="14.5" height="15.00" fill="#f0f1f1"/><rect x="27" y="15.20" width="15" height="15.00" fill="#f0f1f1"/><rect x="55" y="15.20" width="15" height="15.00" fill="#f0f1f1"/><rect x="0" y="30.10" width="14.5" height="15.00" fill="#0a6cff"/><rect x="27" y="30.10" width="15" height="15.00" fill="#0a6cff"/><rect x="55" y="30.10" width="15" height="15.00" fill="#0a6cff"/><rect x="0" y="45.00" width="14.5" height="15.00" fill="#0a4ea2"/><rect x="27" y="45.00" width="15" height="15.00" fill="#0a4ea2"/><rect x="55" y="45.00" width="15" height="15.00" fill="#0a4ea2"/><rect x="0" y="59.90" width="14.5" height="15.00" fill="#2e86f0"/><rect x="27" y="59.90" width="15" height="15.00" fill="#2e86f0"/><rect x="55" y="59.90" width="15" height="15.00" fill="#2e86f0"/><rect x="0" y="74.80" width="14.5" height="15.00" fill="#bedcfb"/><rect x="27" y="74.80" width="15" height="15.00" fill="#bedcfb"/><rect x="55" y="74.80" width="15" height="15.00" fill="#bedcfb"/><rect x="0" y="89.70" width="14.5" height="15.00" fill="#f58b57"/><rect x="27" y="89.70" width="15" height="15.00" fill="#f58b57"/><rect x="55" y="89.70" width="15" height="15.00" fill="#f58b57"/><rect x="0" y="104.60" width="14.5" height="15.00" fill="#f5c09e"/><rect x="27" y="104.60" width="15" height="15.00" fill="#f5c09e"/><rect x="55" y="104.60" width="15" height="15.00" fill="#f5c09e"/><rect x="0" y="119.50" width="14.5" height="15.00" fill="#b4b4b4"/><rect x="27" y="119.50" width="15" height="15.00" fill="#b4b4b4"/><rect x="55" y="119.50" width="15" height="15.00" fill="#b4b4b4"/><rect x="0" y="138.10" width="14.5" height="15.07" fill="#1f3a5f"/><path d="M3 152.5H13.9V141.1" fill="none" stroke="#ffffff" stroke-opacity="0.28" stroke-width="0.8"/><rect x="27" y="138.10" width="15" height="15.07" fill="#1f3a5f"/><path d="M30 152.5H41.4V141.1" fill="none" stroke="#ffffff" stroke-opacity="0.28" stroke-width="0.8"/><rect x="55" y="138.10" width="15" height="15.07" fill="#1f3a5f"/><path d="M58 152.5H69.4V141.1" fill="none" stroke="#ffffff" stroke-opacity="0.28" stroke-width="0.8"/><rect x="0" y="153.07" width="14.5" height="15.07" fill="#041d4d"/><path d="M3 167.5H13.9V156.1" fill="none" stroke="#ffffff" stroke-opacity="0.28" stroke-width="0.8"/><rect x="27" y="153.07" width="15" height="15.07" fill="#041d4d"/><path d="M30 167.5H41.4V156.1" fill="none" stroke="#ffffff" stroke-opacity="0.28" stroke-width="0.8"/><rect x="55" y="153.07" width="15" height="15.07" fill="#041d4d"/><path d="M58 167.5H69.4V156.1" fill="none" stroke="#ffffff" stroke-opacity="0.28" stroke-width="0.8"/><rect x="0" y="168.04" width="14.5" height="15.07" fill="#041d4d"/><path d="M3 182.4H13.9V171.0" fill="none" stroke="#ffffff" stroke-opacity="0.28" stroke-width="0.8"/><rect x="27" y="168.04" width="15" height="15.07" fill="#041d4d"/><path d="M30 182.4H41.4V171.0" fill="none" stroke="#ffffff" stroke-opacity="0.28" stroke-width="0.8"/><rect x="55" y="168.04" width="15" height="15.07" fill="#041d4d"/><path d="M58 182.4H69.4V171.0" fill="none" stroke="#ffffff" stroke-opacity="0.28" stroke-width="0.8"/><rect x="0" y="183.01" width="14.5" height="15.07" fill="#041d4d"/><path d="M3 197.4H13.9V186.0" fill="none" stroke="#ffffff" stroke-opacity="0.28" stroke-width="0.8"/><rect x="27" y="183.01" width="15" height="15.07" fill="#041d4d"/><path d="M30 197.4H41.4V186.0" fill="none" stroke="#ffffff" stroke-opacity="0.28" stroke-width="0.8"/><rect x="55" y="183.01" width="15" height="15.07" fill="#041d4d"/><path d="M58 197.4H69.4V186.0" fill="none" stroke="#ffffff" stroke-opacity="0.28" stroke-width="0.8"/><rect x="0" y="197.98" width="14.5" height="15.07" fill="#03378a"/><path d="M3 212.4H13.9V201.0" fill="none" stroke="#ffffff" stroke-opacity="0.28" stroke-width="0.8"/><rect x="27" y="197.98" width="15" height="15.07" fill="#03378a"/><path d="M30 212.4H41.4V201.0" fill="none" stroke="#ffffff" stroke-opacity="0.28" stroke-width="0.8"/><rect x="55" y="197.98" width="15" height="15.07" fill="#03378a"/><path d="M58 212.4H69.4V201.0" fill="none" stroke="#ffffff" stroke-opacity="0.28" stroke-width="0.8"/><rect x="0" y="212.95" width="14.5" height="15.07" fill="#033e96"/><path d="M3 227.3H13.9V215.9" fill="none" stroke="#ffffff" stroke-opacity="0.28" stroke-width="0.8"/><rect x="27" y="212.95" width="15" height="15.07" fill="#033e96"/><path d="M30 227.3H41.4V215.9" fill="none" stroke="#ffffff" stroke-opacity="0.28" stroke-width="0.8"/><rect x="55" y="212.95" width="15" height="15.07" fill="#033e96"/><path d="M58 227.3H69.4V215.9" fill="none" stroke="#ffffff" stroke-opacity="0.28" stroke-width="0.8"/><rect x="0" y="227.92" width="14.5" height="15.07" fill="#0340a0"/><path d="M3 242.3H13.9V230.9" fill="none" stroke="#ffffff" stroke-opacity="0.28" stroke-width="0.8"/><rect x="27" y="227.92" width="15" height="15.07" fill="#0340a0"/><path d="M30 242.3H41.4V230.9" fill="none" stroke="#ffffff" stroke-opacity="0.28" stroke-width="0.8"/><rect x="55" y="227.92" width="15" height="15.07" fill="#0340a0"/><path d="M58 242.3H69.4V230.9" fill="none" stroke="#ffffff" stroke-opacity="0.28" stroke-width="0.8"/><rect x="0" y="242.89" width="14.5" height="15.07" fill="#043d98"/><path d="M3 257.3H13.9V245.9" fill="none" stroke="#ffffff" stroke-opacity="0.28" stroke-width="0.8"/><rect x="27" y="242.89" width="15" height="15.07" fill="#043d98"/><path d="M30 257.3H41.4V245.9" fill="none" stroke="#ffffff" stroke-opacity="0.28" stroke-width="0.8"/><rect x="55" y="242.89" width="15" height="15.07" fill="#043d98"/><path d="M58 257.3H69.4V245.9" fill="none" stroke="#ffffff" stroke-opacity="0.28" stroke-width="0.8"/><rect x="0" y="257.86" width="14.5" height="15.07" fill="#0448a8"/><path d="M3 272.3H13.9V260.9" fill="none" stroke="#ffffff" stroke-opacity="0.28" stroke-width="0.8"/><rect x="27" y="257.86" width="15" height="15.07" fill="#0448a8"/><path d="M30 272.3H41.4V260.9" fill="none" stroke="#ffffff" stroke-opacity="0.28" stroke-width="0.8"/><rect x="55" y="257.86" width="15" height="15.07" fill="#0448a8"/><path d="M58 272.3H69.4V260.9" fill="none" stroke="#ffffff" stroke-opacity="0.28" stroke-width="0.8"/><rect x="0" y="272.83" width="14.5" height="15.07" fill="#0652b8"/><path d="M3 287.2H13.9V275.8" fill="none" stroke="#ffffff" stroke-opacity="0.28" stroke-width="0.8"/><rect x="27" y="272.83" width="15" height="15.07" fill="#0652b8"/><path d="M30 287.2H41.4V275.8" fill="none" stroke="#ffffff" stroke-opacity="0.28" stroke-width="0.8"/><rect x="55" y="272.83" width="15" height="15.07" fill="#0652b8"/><path d="M58 287.2H69.4V275.8" fill="none" stroke="#ffffff" stroke-opacity="0.28" stroke-width="0.8"/><rect x="0" y="287.80" width="14.5" height="15.07" fill="#0654c0"/><path d="M3 302.2H13.9V290.8" fill="none" stroke="#ffffff" stroke-opacity="0.28" stroke-width="0.8"/><rect x="27" y="287.80" width="15" height="15.07" fill="#0654c0"/><path d="M30 302.2H41.4V290.8" fill="none" stroke="#ffffff" stroke-opacity="0.28" stroke-width="0.8"/><rect x="55" y="287.80" width="15" height="15.07" fill="#0654c0"/><path d="M58 302.2H69.4V290.8" fill="none" stroke="#ffffff" stroke-opacity="0.28" stroke-width="0.8"/><rect x="0" y="302.77" width="14.5" height="15.07" fill="#0760d0"/><path d="M3 317.2H13.9V305.8" fill="none" stroke="#ffffff" stroke-opacity="0.28" stroke-width="0.8"/><rect x="27" y="302.77" width="15" height="15.07" fill="#0760d0"/><path d="M30 317.2H41.4V305.8" fill="none" stroke="#ffffff" stroke-opacity="0.28" stroke-width="0.8"/><rect x="55" y="302.77" width="15" height="15.07" fill="#0760d0"/><path d="M58 317.2H69.4V305.8" fill="none" stroke="#ffffff" stroke-opacity="0.28" stroke-width="0.8"/><rect x="0" y="317.74" width="14.5" height="15.07" fill="#0a6cf0"/><path d="M3 332.1H13.9V320.7" fill="none" stroke="#ffffff" stroke-opacity="0.28" stroke-width="0.8"/><rect x="27" y="317.74" width="15" height="15.07" fill="#0a6cf0"/><path d="M30 332.1H41.4V320.7" fill="none" stroke="#ffffff" stroke-opacity="0.28" stroke-width="0.8"/><rect x="55" y="317.74" width="15" height="15.07" fill="#0a6cf0"/><path d="M58 332.1H69.4V320.7" fill="none" stroke="#ffffff" stroke-opacity="0.28" stroke-width="0.8"/><rect x="0" y="332.71" width="14.5" height="15.07" fill="#127aff"/><path d="M3 347.1H13.9V335.7" fill="none" stroke="#ffffff" stroke-opacity="0.28" stroke-width="0.8"/><rect x="27" y="332.71" width="15" height="15.07" fill="#127aff"/><path d="M30 347.1H41.4V335.7" fill="none" stroke="#ffffff" stroke-opacity="0.28" stroke-width="0.8"/><rect x="55" y="332.71" width="15" height="15.07" fill="#127aff"/><path d="M58 347.1H69.4V335.7" fill="none" stroke="#ffffff" stroke-opacity="0.28" stroke-width="0.8"/><rect x="0" y="347.68" width="14.5" height="15.07" fill="#2a88ff"/><path d="M3 362.1H13.9V350.7" fill="none" stroke="#ffffff" stroke-opacity="0.28" stroke-width="0.8"/><rect x="27" y="347.68" width="15" height="15.07" fill="#2a88ff"/><path d="M30 362.1H41.4V350.7" fill="none" stroke="#ffffff" stroke-opacity="0.28" stroke-width="0.8"/><rect x="55" y="347.68" width="15" height="15.07" fill="#2a88ff"/><path d="M58 362.1H69.4V350.7" fill="none" stroke="#ffffff" stroke-opacity="0.28" stroke-width="0.8"/><rect x="0" y="362.65" width="14.5" height="15.07" fill="#3490ff"/><path d="M3 377.1H13.9V365.7" fill="none" stroke="#ffffff" stroke-opacity="0.28" stroke-width="0.8"/><rect x="27" y="362.65" width="15" height="15.07" fill="#3490ff"/><path d="M30 377.1H41.4V365.7" fill="none" stroke="#ffffff" stroke-opacity="0.28" stroke-width="0.8"/><rect x="55" y="362.65" width="15" height="15.07" fill="#3490ff"/><path d="M58 377.1H69.4V365.7" fill="none" stroke="#ffffff" stroke-opacity="0.28" stroke-width="0.8"/><rect x="0" y="377.62" width="14.5" height="15.07" fill="#4a9ff8"/><path d="M3 392.0H13.9V380.6" fill="none" stroke="#ffffff" stroke-opacity="0.28" stroke-width="0.8"/><rect x="27" y="377.62" width="15" height="15.07" fill="#4a9ff8"/><path d="M30 392.0H41.4V380.6" fill="none" stroke="#ffffff" stroke-opacity="0.28" stroke-width="0.8"/><rect x="55" y="377.62" width="15" height="15.07" fill="#4a9ff8"/><path d="M58 392.0H69.4V380.6" fill="none" stroke="#ffffff" stroke-opacity="0.28" stroke-width="0.8"/><rect x="0" y="392.59" width="14.5" height="15.07" fill="#52b4fa"/><path d="M3 407.0H13.9V395.6" fill="none" stroke="#ffffff" stroke-opacity="0.28" stroke-width="0.8"/><rect x="27" y="392.59" width="15" height="15.07" fill="#52b4fa"/><path d="M30 407.0H41.4V395.6" fill="none" stroke="#ffffff" stroke-opacity="0.28" stroke-width="0.8"/><rect x="55" y="392.59" width="15" height="15.07" fill="#52b4fa"/><path d="M58 407.0H69.4V395.6" fill="none" stroke="#ffffff" stroke-opacity="0.28" stroke-width="0.8"/><rect x="0" y="407.56" width="14.5" height="15.07" fill="#5aa8f5"/><path d="M3 422.0H13.9V410.6" fill="none" stroke="#ffffff" stroke-opacity="0.28" stroke-width="0.8"/><rect x="27" y="407.56" width="15" height="15.07" fill="#5aa8f5"/><path d="M30 422.0H41.4V410.6" fill="none" stroke="#ffffff" stroke-opacity="0.28" stroke-width="0.8"/><rect x="55" y="407.56" width="15" height="15.07" fill="#5aa8f5"/><path d="M58 422.0H69.4V410.6" fill="none" stroke="#ffffff" stroke-opacity="0.28" stroke-width="0.8"/><rect x="0" y="422.53" width="14.5" height="15.07" fill="#85b6f5"/><path d="M3 436.9H13.9V425.5" fill="none" stroke="#ffffff" stroke-opacity="0.28" stroke-width="0.8"/><rect x="27" y="422.53" width="15" height="15.07" fill="#85b6f5"/><path d="M30 436.9H41.4V425.5" fill="none" stroke="#ffffff" stroke-opacity="0.28" stroke-width="0.8"/><rect x="55" y="422.53" width="15" height="15.07" fill="#85b6f5"/><path d="M58 436.9H69.4V425.5" fill="none" stroke="#ffffff" stroke-opacity="0.28" stroke-width="0.8"/><rect x="0" y="437.50" width="14.5" height="15.07" fill="#92c2f5"/><path d="M3 451.9H13.9V440.5" fill="none" stroke="#ffffff" stroke-opacity="0.28" stroke-width="0.8"/><rect x="27" y="437.50" width="15" height="15.07" fill="#92c2f5"/><path d="M30 451.9H41.4V440.5" fill="none" stroke="#ffffff" stroke-opacity="0.28" stroke-width="0.8"/><rect x="55" y="437.50" width="15" height="15.07" fill="#92c2f5"/><path d="M58 451.9H69.4V440.5" fill="none" stroke="#ffffff" stroke-opacity="0.28" stroke-width="0.8"/><rect x="0" y="452.47" width="14.5" height="15.07" fill="#8fc2f5"/><path d="M3 466.9H13.9V455.5" fill="none" stroke="#ffffff" stroke-opacity="0.28" stroke-width="0.8"/><rect x="27" y="452.47" width="15" height="15.07" fill="#8fc2f5"/><path d="M30 466.9H41.4V455.5" fill="none" stroke="#ffffff" stroke-opacity="0.28" stroke-width="0.8"/><rect x="55" y="452.47" width="15" height="15.07" fill="#8fc2f5"/><path d="M58 466.9H69.4V455.5" fill="none" stroke="#ffffff" stroke-opacity="0.28" stroke-width="0.8"/><rect x="0" y="467.44" width="14.5" height="15.07" fill="#bddcf8"/><path d="M3 481.8H13.9V470.4" fill="none" stroke="#ffffff" stroke-opacity="0.28" stroke-width="0.8"/><rect x="27" y="467.44" width="15" height="15.07" fill="#bddcf8"/><path d="M30 481.8H41.4V470.4" fill="none" stroke="#ffffff" stroke-opacity="0.28" stroke-width="0.8"/><rect x="55" y="467.44" width="15" height="15.07" fill="#bddcf8"/><path d="M58 481.8H69.4V470.4" fill="none" stroke="#ffffff" stroke-opacity="0.28" stroke-width="0.8"/><rect x="0" y="482.41" width="14.5" height="15.07" fill="#d5e8fb"/><path d="M3 496.8H13.9V485.4" fill="none" stroke="#ffffff" stroke-opacity="0.28" stroke-width="0.8"/><rect x="27" y="482.41" width="15" height="15.07" fill="#d5e8fb"/><path d="M30 496.8H41.4V485.4" fill="none" stroke="#ffffff" stroke-opacity="0.28" stroke-width="0.8"/><rect x="55" y="482.41" width="15" height="15.07" fill="#d5e8fb"/><path d="M58 496.8H69.4V485.4" fill="none" stroke="#ffffff" stroke-opacity="0.28" stroke-width="0.8"/><rect x="0" y="497.38" width="14.5" height="15.07" fill="#c0dcf8"/><path d="M3 511.8H13.9V500.4" fill="none" stroke="#ffffff" stroke-opacity="0.28" stroke-width="0.8"/><rect x="27" y="497.38" width="15" height="15.07" fill="#c0dcf8"/><path d="M30 511.8H41.4V500.4" fill="none" stroke="#ffffff" stroke-opacity="0.28" stroke-width="0.8"/><rect x="55" y="497.38" width="15" height="15.07" fill="#c0dcf8"/><path d="M58 511.8H69.4V500.4" fill="none" stroke="#ffffff" stroke-opacity="0.28" stroke-width="0.8"/><rect x="0" y="512.35" width="14.5" height="15.07" fill="#d6eafc"/><path d="M3 526.8H13.9V515.4" fill="none" stroke="#ffffff" stroke-opacity="0.28" stroke-width="0.8"/><rect x="27" y="512.35" width="15" height="15.07" fill="#d6eafc"/><path d="M30 526.8H41.4V515.4" fill="none" stroke="#ffffff" stroke-opacity="0.28" stroke-width="0.8"/><rect x="55" y="512.35" width="15" height="15.07" fill="#d6eafc"/><path d="M58 526.8H69.4V515.4" fill="none" stroke="#ffffff" stroke-opacity="0.28" stroke-width="0.8"/><rect x="0" y="527.32" width="14.5" height="15.07" fill="#eef5fd"/><path d="M3 541.7H13.9V530.3" fill="none" stroke="#ffffff" stroke-opacity="0.28" stroke-width="0.8"/><rect x="27" y="527.32" width="15" height="15.07" fill="#eef5fd"/><path d="M30 541.7H41.4V530.3" fill="none" stroke="#ffffff" stroke-opacity="0.28" stroke-width="0.8"/><rect x="55" y="527.32" width="15" height="15.07" fill="#eef5fd"/><path d="M58 541.7H69.4V530.3" fill="none" stroke="#ffffff" stroke-opacity="0.28" stroke-width="0.8"/><rect x="0" y="542.29" width="14.5" height="15.07" fill="#eef5fd"/><path d="M3 556.7H13.9V545.3" fill="none" stroke="#ffffff" stroke-opacity="0.28" stroke-width="0.8"/><rect x="27" y="542.29" width="15" height="15.07" fill="#eef5fd"/><path d="M30 556.7H41.4V545.3" fill="none" stroke="#ffffff" stroke-opacity="0.28" stroke-width="0.8"/><rect x="55" y="542.29" width="15" height="15.07" fill="#eef5fd"/><path d="M58 556.7H69.4V545.3" fill="none" stroke="#ffffff" stroke-opacity="0.28" stroke-width="0.8"/><rect x="0" y="557.26" width="14.5" height="15.07" fill="#e0eefc"/><path d="M3 571.7H13.9V560.3" fill="none" stroke="#ffffff" stroke-opacity="0.28" stroke-width="0.8"/><rect x="27" y="557.26" width="15" height="15.07" fill="#e0eefc"/><path d="M30 571.7H41.4V560.3" fill="none" stroke="#ffffff" stroke-opacity="0.28" stroke-width="0.8"/><rect x="55" y="557.26" width="15" height="15.07" fill="#e0eefc"/><path d="M58 571.7H69.4V560.3" fill="none" stroke="#ffffff" stroke-opacity="0.28" stroke-width="0.8"/><rect x="0" y="572.23" width="14.5" height="15.07" fill="#f07f45"/><path d="M3 586.6H13.9V575.2" fill="none" stroke="#ffffff" stroke-opacity="0.28" stroke-width="0.8"/><rect x="27" y="572.23" width="15" height="15.07" fill="#f07f45"/><path d="M30 586.6H41.4V575.2" fill="none" stroke="#ffffff" stroke-opacity="0.28" stroke-width="0.8"/><rect x="55" y="572.23" width="15" height="15.07" fill="#f07f45"/><path d="M58 586.6H69.4V575.2" fill="none" stroke="#ffffff" stroke-opacity="0.28" stroke-width="0.8"/><rect x="0" y="587.20" width="14.5" height="15.07" fill="#f07f45"/><path d="M3 601.6H13.9V590.2" fill="none" stroke="#ffffff" stroke-opacity="0.28" stroke-width="0.8"/><rect x="27" y="587.20" width="15" height="15.07" fill="#f07f45"/><path d="M30 601.6H41.4V590.2" fill="none" stroke="#ffffff" stroke-opacity="0.28" stroke-width="0.8"/><rect x="55" y="587.20" width="15" height="15.07" fill="#f07f45"/><path d="M58 601.6H69.4V590.2" fill="none" stroke="#ffffff" stroke-opacity="0.28" stroke-width="0.8"/></svg>
<div style="position:absolute;left:0px;top:921px;width:75px;height:10px;background:#d6d6d6;"></div>
<div style="position:absolute;left:77px;top:301px;width:10px;height:620px;background:#f3f3f3;"></div>
<div style="position:absolute;left:77px;top:301px;width:10px;height:258px;background:#d6d6d6;"></div>
<div style="position:absolute;left:75px;top:921px;width:12px;height:10px;background:#f0f0f0;"></div>
<svg style="position:absolute;left:250px;top:161px;" width="13" height="10" viewBox="0 0 13 10"><path d="M1.8 8L6.5 1.8L11.2 8Z" fill="#6e6e6e" stroke="#6e6e6e" stroke-width="1.6" stroke-linejoin="round"/></svg>
<div style="position:absolute;left:251px;top:177px;width:11px;height:371px;background:#727272;border-radius:6px;"></div>
<svg style="position:absolute;left:250px;top:921px;" width="13" height="10" viewBox="0 0 13 10"><path d="M1.8 1.8L6.5 8L11.2 1.8Z" fill="#6e6e6e" stroke="#6e6e6e" stroke-width="1.6" stroke-linejoin="round"/></svg>
<div class="t" style="left:115.0px;top:178.3px;font-size:16px;color:#c4501c;transform:translateX(-50%);">1</div>
<svg style="position:absolute;left:107px;top:199px;" width="14" height="13" viewBox="0 0 14 13"><path d="M7 0.5L8.8 5H13.5L9.7 7.9L11.1 12.5L7 9.7L2.9 12.5L4.3 7.9L0.5 5H5.2Z" fill="#595959"/><path d="M0 3.5H2M0 6.5H1.5" stroke="#777" stroke-width="0.8"/></svg>
<div class="t" style="left:115.0px;top:250.3px;font-size:16px;color:#404040;transform:translateX(-50%);">2</div>
<div class="t" style="left:115.0px;top:322.3px;font-size:16px;color:#404040;transform:translateX(-50%);">3</div>
<svg style="position:absolute;left:107px;top:343px;" width="14" height="13" viewBox="0 0 14 13"><path d="M7 0.5L8.8 5H13.5L9.7 7.9L11.1 12.5L7 9.7L2.9 12.5L4.3 7.9L0.5 5H5.2Z" fill="#595959"/><path d="M0 3.5H2M0 6.5H1.5" stroke="#777" stroke-width="0.8"/></svg>
<div class="t" style="left:115.0px;top:394.3px;font-size:16px;color:#404040;transform:translateX(-50%);">4</div>
<div class="t" style="left:115.0px;top:466.3px;font-size:16px;color:#404040;transform:translateX(-50%);">5</div>
<div class="t" style="left:115.0px;top:538.3px;font-size:16px;color:#404040;transform:translateX(-50%);">6</div>
<div class="t" style="left:115.0px;top:610.3px;font-size:16px;color:#404040;transform:translateX(-50%);">7</div>
<div class="t" style="left:115.0px;top:682.3px;font-size:16px;color:#404040;transform:translateX(-50%);">8</div>
<div class="t" style="left:115.0px;top:754.3px;font-size:16px;color:#404040;transform:translateX(-50%);">9</div>
<div class="t" style="left:110.5px;top:826.3px;font-size:16px;color:#404040;transform:translateX(-50%);">10</div>
<svg style="position:absolute;left:107px;top:847px;" width="14" height="13" viewBox="0 0 14 13"><path d="M7 0.5L8.8 5H13.5L9.7 7.9L11.1 12.5L7 9.7L2.9 12.5L4.3 7.9L0.5 5H5.2Z" fill="#595959"/><path d="M0 3.5H2M0 6.5H1.5" stroke="#777" stroke-width="0.8"/></svg>
<div class="t" style="left:110.5px;top:898.3px;font-size:16px;color:#404040;transform:translateX(-50%);">11</div>
<div style="position:absolute;left:135.8px;top:176.8px;width:88px;height:53px;border:3.5px solid #b9441f;border-radius:8px;box-sizing:border-box;"></div>
<div style="position:absolute;left:139px;top:180px;width:82px;height:47px;background:#fff;border-radius:5px;"></div>
<div style="position:absolute;left:140px;top:180px;width:80.5px;height:46px;border-radius:4px;overflow:hidden;box-shadow:0 0 0 1px #fff;background:#fff;"><svg width="81" height="46" viewBox="0 0 920 518" preserveAspectRatio="none"><rect width="920" height="518" fill="#044ea0"/>
<path d="M749 184.6A174 174 0 0 1 923 10.6V64.6A120 120 0 0 0 803 184.6Z" fill="#5aafff"/>
<path d="M723 328V148L683 156L740 64L790 162L750 149V328Z" fill="#f5a077"/>
<path d="M788.5 184.6A131 131 0 0 1 919.5 53.6V97.6A87 87 0 0 0 832.5 184.6Z" fill="#0a74ff"/>
<path d="M787 185A133 133 0 0 0 920 318V273.5A88.5 88.5 0 0 1 831.5 185Z" fill="#f0f2f3"/>
<circle cx="685" cy="348" r="64" fill="none" stroke="#7f9cc8" stroke-width="12" opacity="0.5"/>
<path d="M920 382H798L716 463M920 404H817L775 446" fill="none" stroke="#f5a077" stroke-width="14"/>
<text x="28" y="66" font-size="34" font-weight="bold" fill="#fff" font-family="Liberation Sans">Logo</text><circle cx="118" cy="28" r="9" fill="none" stroke="#fff" stroke-width="3"/>
<text x="28" y="345" font-size="60" font-weight="bold" fill="#fff" font-family="Liberation Sans">Company</text>
<text x="28" y="415" font-size="60" font-weight="bold" fill="#fff" font-family="Liberation Sans">Presentation</text>
<rect x="28" y="448" width="360" height="6" fill="#6f8fc4"/></svg></div>
<div style="position:absolute;left:140px;top:252px;width:80.5px;height:46px;border-radius:4px;overflow:hidden;box-shadow:0 0 0 1px #cfcfcf, 0 1px 2px rgba(0,0,0,.15);background:#fff;"><svg width="81" height="46" viewBox="0 0 81 46"><rect width="81" height="46" fill="#fff"/>
<rect x="3.5" y="3.2" width="14" height="2.3" fill="#3b7fe0" opacity="0.9"/><rect x="0" y="11.5" width="2.2" height="1.4" fill="#2e7be0"/>
<text x="68" y="7" font-size="4.2" font-weight="bold" fill="#555" font-family="Liberation Sans">Logo</text><circle cx="76.5" cy="3" r="1" fill="none" stroke="#9ab" stroke-width="0.4"/>
<rect x="10" y="44.5" width="2" height="0.8" fill="#bbb"/><rect x="0" y="10" width="2" height="1.5" fill="#2e7be0"/><path d="M4 12H6M4 15H6M4 18H6M4 21H6" stroke="#2e7be0" stroke-width="0.9"/><path d="M10 12H17M10 15H17M10 18H18M10 21H19" stroke="#999" stroke-width="0.7"/></svg></div>
<div style="position:absolute;left:140px;top:324px;width:80.5px;height:46px;border-radius:4px;overflow:hidden;box-shadow:0 0 0 1px #cfcfcf, 0 1px 2px rgba(0,0,0,.15);background:#fff;"><svg width="81" height="46" viewBox="0 0 81 46"><rect width="81" height="46" fill="#5aaaf5"/>
<path d="M58 22A23 23 0 0 1 81 -1V22Z" fill="#c0dcff"/><path d="M58 22A23 23 0 0 0 81 45V22Z" fill="#fdf1cc"/>
<path d="M65.5 22A15.5 15.5 0 0 1 81 6.5V22Z" fill="#0a6cff"/><path d="M65.5 22A15.5 15.5 0 0 0 81 37.5V22Z" fill="#f5a077"/>
<circle cx="81" cy="22" r="10.3" fill="#044ea0"/>
<text x="3" y="8" font-size="5" font-weight="bold" fill="#fff" font-family="Liberation Sans">01</text>
<text x="3" y="31.5" font-size="4.6" font-weight="bold" fill="#fff" font-family="Liberation Sans">Who we are</text><rect x="3" y="34" width="22" height="0.9" fill="#cfe3fb"/></svg></div>
<div style="position:absolute;left:140px;top:396px;width:80.5px;height:46px;border-radius:4px;overflow:hidden;box-shadow:0 0 0 1px #cfcfcf, 0 1px 2px rgba(0,0,0,.15);background:#fff;"><svg width="81" height="46" viewBox="0 0 81 46"><rect width="81" height="46" fill="#fff"/>
<rect x="3.5" y="3.2" width="12" height="2.3" fill="#3b7fe0" opacity="0.9"/><rect x="0" y="11.5" width="2.2" height="1.4" fill="#2e7be0"/>
<text x="68" y="7" font-size="4.2" font-weight="bold" fill="#555" font-family="Liberation Sans">Logo</text><circle cx="76.5" cy="3" r="1" fill="none" stroke="#9ab" stroke-width="0.4"/>
<rect x="10" y="44.5" width="2" height="0.8" fill="#bbb"/><path d="M14 18H58M10 26H40M20 32H62" stroke="#999" stroke-width="0.6"/><path d="M20 33L30 26L44 29L54 22" fill="none" stroke="#777" stroke-width="0.7"/><circle cx="25" cy="31" r="2.5" fill="#f07f45"/><circle cx="34" cy="26.5" r="2" fill="#f5a077"/><circle cx="46" cy="28" r="2" fill="#f5c09e"/><circle cx="42" cy="20" r="1.6" fill="#2e7be0"/><circle cx="54" cy="17" r="1.6" fill="#2e7be0"/></svg></div>
<div style="position:absolute;left:140px;top:468px;width:80.5px;height:46px;border-radius:4px;overflow:hidden;box-shadow:0 0 0 1px #cfcfcf, 0 1px 2px rgba(0,0,0,.15);background:#fff;"><svg width="81" height="46" viewBox="0 0 81 46"><rect width="81" height="46" fill="#fff"/>
<rect x="3.5" y="3.2" width="10" height="2.3" fill="#3b7fe0" opacity="0.9"/><rect x="0" y="11.5" width="2.2" height="1.4" fill="#2e7be0"/>
<text x="68" y="7" font-size="4.2" font-weight="bold" fill="#555" font-family="Liberation Sans">Logo</text><circle cx="76.5" cy="3" r="1" fill="none" stroke="#9ab" stroke-width="0.4"/>
<rect x="10" y="44.5" width="2" height="0.8" fill="#bbb"/><rect x="28" y="26" width="34" height="14" fill="#eee" opacity="0.8"/><path d="M10 30L35 17L72 13M35 17L38 38M35 17L52 26M20 22L35 17" fill="none" stroke="#1a5fb4" stroke-width="0.7"/><path d="M14 25L26 23M50 30L62 34M56 20L66 23" stroke="#f07f45" stroke-width="0.7"/><path d="M5 20H20M5 32H18M55 35H72" stroke="#444" stroke-width="0.7"/><circle cx="35" cy="17" r="1.2" fill="#1a5fb4"/></svg></div>
<div style="position:absolute;left:140px;top:540px;width:80.5px;height:46px;border-radius:4px;overflow:hidden;box-shadow:0 0 0 1px #cfcfcf, 0 1px 2px rgba(0,0,0,.15);background:#fff;"><svg width="81" height="46" viewBox="0 0 81 46"><rect width="81" height="46" fill="#fff"/>
<rect x="3.5" y="3.2" width="25" height="2.3" fill="#3b7fe0" opacity="0.9"/><rect x="0" y="11.5" width="2.2" height="1.4" fill="#2e7be0"/>
<text x="68" y="7" font-size="4.2" font-weight="bold" fill="#555" font-family="Liberation Sans">Logo</text><circle cx="76.5" cy="3" r="1" fill="none" stroke="#9ab" stroke-width="0.4"/>
<rect x="10" y="44.5" width="2" height="0.8" fill="#bbb"/><rect x="5" y="15.5" width="15.5" height="13.5" fill="#dfe4ea"/><ellipse cx="12.8" cy="23" rx="4.6" ry="6" fill="#a07a62"/><path d="M8 21A4.8 5.5 0 0 1 17.6 21L17.6 19A4.8 4.5 0 0 0 8 19Z" fill="#3a3030"/><path d="M5 29H20.5V33A3 3 0 0 1 17.5 36H5Z" fill="#0a4ea2"/><rect x="7" y="30.5" width="7" height="0.8" fill="#cfe0f7"/><rect x="7" y="32.5" width="9" height="0.8" fill="#cfe0f7"/><rect x="23" y="15.5" width="15.5" height="13.5" fill="#dfe4ea"/><ellipse cx="30.8" cy="23" rx="4.6" ry="6" fill="#b08868"/><path d="M26 21A4.8 5.5 0 0 1 35.6 21L35.6 19A4.8 4.5 0 0 0 26 19Z" fill="#2a2020"/><path d="M23 29H38.5V33A3 3 0 0 1 35.5 36H23Z" fill="#0a4ea2"/><rect x="25" y="30.5" width="7" height="0.8" fill="#cfe0f7"/><rect x="25" y="32.5" width="9" height="0.8" fill="#cfe0f7"/><rect x="41" y="15.5" width="15.5" height="13.5" fill="#dfe4ea"/><ellipse cx="48.8" cy="23" rx="4.6" ry="6" fill="#c89a80"/><path d="M44 21A4.8 5.5 0 0 1 53.6 21L53.6 19A4.8 4.5 0 0 0 44 19Z" fill="#6a4a3a"/><path d="M41 29H56.5V33A3 3 0 0 1 53.5 36H41Z" fill="#0a4ea2"/><rect x="43" y="30.5" width="7" height="0.8" fill="#cfe0f7"/><rect x="43" y="32.5" width="9" height="0.8" fill="#cfe0f7"/><rect x="59" y="15.5" width="15.5" height="13.5" fill="#dfe4ea"/><ellipse cx="66.8" cy="23" rx="4.6" ry="6" fill="#8a6050"/><path d="M62 21A4.8 5.5 0 0 1 71.6 21L71.6 19A4.8 4.5 0 0 0 62 19Z" fill="#2a1a1a"/><path d="M59 29H74.5V33A3 3 0 0 1 71.5 36H59Z" fill="#0a4ea2"/><rect x="61" y="30.5" width="7" height="0.8" fill="#cfe0f7"/><rect x="61" y="32.5" width="9" height="0.8" fill="#cfe0f7"/></svg></div>
<div style="position:absolute;left:140px;top:612px;width:80.5px;height:46px;border-radius:4px;overflow:hidden;box-shadow:0 0 0 1px #cfcfcf, 0 1px 2px rgba(0,0,0,.15);background:#fff;"><svg width="81" height="46" viewBox="0 0 81 46"><rect width="81" height="46" fill="#fff"/>
<rect x="3.5" y="3.2" width="24" height="2.3" fill="#3b7fe0" opacity="0.9"/><rect x="0" y="11.5" width="2.2" height="1.4" fill="#2e7be0"/>
<text x="68" y="7" font-size="4.2" font-weight="bold" fill="#555" font-family="Liberation Sans">Logo</text><circle cx="76.5" cy="3" r="1" fill="none" stroke="#9ab" stroke-width="0.4"/>
<rect x="10" y="44.5" width="2" height="0.8" fill="#bbb"/><rect x="5" y="15.5" width="15.5" height="13.5" fill="#dfe4ea"/><ellipse cx="12.8" cy="23" rx="4.6" ry="6" fill="#b89078"/><path d="M8 21A4.8 5.5 0 0 1 17.6 21L17.6 19A4.8 4.5 0 0 0 8 19Z" fill="#1a1414"/><path d="M5 29H20.5V33A3 3 0 0 1 17.5 36H5Z" fill="#0a4ea2"/><rect x="7" y="30.5" width="7" height="0.8" fill="#cfe0f7"/><rect x="7" y="32.5" width="9" height="0.8" fill="#cfe0f7"/><rect x="23" y="15.5" width="15.5" height="13.5" fill="#dfe4ea"/><ellipse cx="30.8" cy="23" rx="4.6" ry="6" fill="#d0b0a0"/><path d="M26 21A4.8 5.5 0 0 1 35.6 21L35.6 19A4.8 4.5 0 0 0 26 19Z" fill="#d8d0c0"/><path d="M23 29H38.5V33A3 3 0 0 1 35.5 36H23Z" fill="#0a4ea2"/><rect x="25" y="30.5" width="7" height="0.8" fill="#cfe0f7"/><rect x="25" y="32.5" width="9" height="0.8" fill="#cfe0f7"/><rect x="41" y="15.5" width="15.5" height="13.5" fill="#dfe4ea"/><ellipse cx="48.8" cy="23" rx="4.6" ry="6" fill="#c0a090"/><path d="M44 21A4.8 5.5 0 0 1 53.6 21L53.6 19A4.8 4.5 0 0 0 44 19Z" fill="#888"/><path d="M41 29H56.5V33A3 3 0 0 1 53.5 36H41Z" fill="#0a4ea2"/><rect x="43" y="30.5" width="7" height="0.8" fill="#cfe0f7"/><rect x="43" y="32.5" width="9" height="0.8" fill="#cfe0f7"/></svg></div>
<div style="position:absolute;left:140px;top:684px;width:80.5px;height:46px;border-radius:4px;overflow:hidden;box-shadow:0 0 0 1px #cfcfcf, 0 1px 2px rgba(0,0,0,.15);background:#fff;"><svg width="81" height="46" viewBox="0 0 81 46"><rect width="81" height="46" fill="#fff"/>
<rect x="3.5" y="3.2" width="18" height="2.3" fill="#3b7fe0" opacity="0.9"/><rect x="0" y="11.5" width="2.2" height="1.4" fill="#2e7be0"/>
<text x="68" y="7" font-size="4.2" font-weight="bold" fill="#555" font-family="Liberation Sans">Logo</text><circle cx="76.5" cy="3" r="1" fill="none" stroke="#9ab" stroke-width="0.4"/>
<rect x="10" y="44.5" width="2" height="0.8" fill="#bbb"/><rect x="41" y="0" width="40" height="46" fill="#e6eaee"/><rect x="46" y="6" width="30" height="22" fill="#f4f6f8"/><path d="M50 12H60M52 16H66M58 20H70" stroke="#9ab" stroke-width="0.6"/><circle cx="55" cy="31" r="3.5" fill="#1a1a1a"/><path d="M49 46V38A6 6 0 0 1 61 38V46Z" fill="#1a5fb4"/><circle cx="69" cy="28" r="3.5" fill="#4a3a30"/><path d="M62 46V36A7 7 0 0 1 76 36V46Z" fill="#8fb5e0"/><path d="M5 15H36M5 17.5H36M5 20H36M5 22.5H34M5 26H36M5 28.5H36M5 31H36M5 33.5H30M5 37H36M5 39.5H28" stroke="#666" stroke-width="0.7"/><rect x="38" y="18" width="3" height="2" fill="#f07f45"/></svg></div>
<div style="position:absolute;left:140px;top:756px;width:80.5px;height:46px;border-radius:4px;overflow:hidden;box-shadow:0 0 0 1px #cfcfcf, 0 1px 2px rgba(0,0,0,.15);background:#fff;"><svg width="81" height="46" viewBox="0 0 81 46"><rect width="81" height="46" fill="#fff"/>
<rect x="3.5" y="3.2" width="36" height="2.3" fill="#3b7fe0" opacity="0.9"/><rect x="0" y="11.5" width="2.2" height="1.4" fill="#2e7be0"/>
<text x="68" y="7" font-size="4.2" font-weight="bold" fill="#555" font-family="Liberation Sans">Logo</text><circle cx="76.5" cy="3" r="1" fill="none" stroke="#9ab" stroke-width="0.4"/>
<rect x="10" y="44.5" width="2" height="0.8" fill="#bbb"/><rect x="3" y="13" width="75" height="28.5" fill="#dcdcdc"/><rect x="3" y="13" width="75" height="10" fill="#ececec"/><circle cx="12" cy="23" r="3.5" fill="#6a5a50"/><path d="M5 41V33A6 6 0 0 1 18 33V41Z" fill="#8a7060"/><circle cx="28" cy="22" r="3.5" fill="#d8b090"/><path d="M22 41V31A6 6 0 0 1 35 31V41Z" fill="#222"/><path d="M35 37H50V41H35Z" fill="#555"/><circle cx="55" cy="22" r="3.5" fill="#2a1a10"/><path d="M48 41V31A7 7 0 0 1 62 31V41Z" fill="#1e2a3a"/><circle cx="68" cy="21" r="3.5" fill="#6a4a30"/><path d="M62 41V31A6 6 0 0 1 75 31V41Z" fill="#7a3a28"/><rect x="3" y="38" width="75" height="3.5" fill="#f4f4f4"/></svg></div>
<div style="position:absolute;left:140px;top:828px;width:80.5px;height:46px;border-radius:4px;overflow:hidden;box-shadow:0 0 0 1px #cfcfcf, 0 1px 2px rgba(0,0,0,.15);background:#fff;"><svg width="81" height="46" viewBox="0 0 81 46"><rect width="81" height="46" fill="#5aaaf5"/>
<path d="M58 22A23 23 0 0 1 81 -1V22Z" fill="#c0dcff"/><path d="M58 22A23 23 0 0 0 81 45V22Z" fill="#fdf1cc"/>
<path d="M65.5 22A15.5 15.5 0 0 1 81 6.5V22Z" fill="#0a6cff"/><path d="M65.5 22A15.5 15.5 0 0 0 81 37.5V22Z" fill="#f5a077"/>
<circle cx="81" cy="22" r="10.3" fill="#044ea0"/>
<text x="3" y="8" font-size="5" font-weight="bold" fill="#fff" font-family="Liberation Sans">02</text>
<text x="3" y="35" font-size="4.6" font-weight="bold" fill="#fff" font-family="Liberation Sans">What we do</text><rect x="3" y="37.5" width="25" height="0.9" fill="#cfe3fb"/></svg></div>
<div style="position:absolute;left:140px;top:900px;width:80.5px;height:46px;border-radius:4px;overflow:hidden;box-shadow:0 0 0 1px #cfcfcf, 0 1px 2px rgba(0,0,0,.15);background:#fff;"><svg width="81" height="46" viewBox="0 0 81 46"><rect width="81" height="46" fill="#fff"/>
<rect x="3.5" y="3.2" width="30" height="2.3" fill="#3b7fe0" opacity="0.9"/><rect x="0" y="11.5" width="2.2" height="1.4" fill="#2e7be0"/>
<text x="68" y="7" font-size="4.2" font-weight="bold" fill="#555" font-family="Liberation Sans">Logo</text><circle cx="76.5" cy="3" r="1" fill="none" stroke="#9ab" stroke-width="0.4"/>
<rect x="10" y="44.5" width="2" height="0.8" fill="#bbb"/><rect x="33" y="13" width="14" height="1" fill="#888"/><rect x="23" y="16" width="24" height="2.2" fill="#2e5fa8"/><rect x="18" y="19.5" width="36" height="3" fill="#f5b890"/><rect x="26" y="23.5" width="20" height="1" fill="#aaa"/><path d="M51 12V26" stroke="#bcd" stroke-width="0.5"/><rect x="53" y="15" width="12" height="1" fill="#888"/><rect x="53" y="17.5" width="16" height="1.6" fill="#2e7be0"/><rect x="53" y="20" width="12" height="1" fill="#aaa"/></svg></div>
<div style="position:absolute;left:273px;top:910px;width:951px;height:25px;background:#f5f5f3;border-radius:10px;"></div>
<svg style="position:absolute;left:279px;top:915px;" width="9" height="11" viewBox="0 0 9 11"><path d="M8.5 0V11L0 5.5Z" fill="#6e6e6e"/></svg>
<div style="position:absolute;left:294px;top:915px;width:802px;height:11px;background:#727272;border-radius:6px;"></div>
<svg style="position:absolute;left:1209px;top:915px;" width="9" height="11" viewBox="0 0 9 11"><path d="M0.5 0V11L9 5.5Z" fill="#6e6e6e"/></svg>
<div style="position:absolute;left:1224px;top:158px;width:21px;height:710px;background:#f5f5f3;border-radius:10px;"></div>
<svg style="position:absolute;left:1228px;top:161px;" width="13" height="10" viewBox="0 0 13 10"><path d="M1.8 8L6.5 1.8L11.2 8Z" fill="#6e6e6e" stroke="#6e6e6e" stroke-width="1.6" stroke-linejoin="round"/></svg>
<div style="position:absolute;left:1229px;top:177px;width:11px;height:31px;background:#727272;border-radius:6px;"></div>
<svg style="position:absolute;left:1228px;top:852px;" width="13" height="10" viewBox="0 0 13 10"><path d="M1.8 1.8L6.5 8L11.2 1.8Z" fill="#6e6e6e" stroke="#6e6e6e" stroke-width="1.6" stroke-linejoin="round"/></svg>
<svg style="position:absolute;left:1228px;top:869px;" width="13" height="37" viewBox="0 0 13 37"><path d="M1.5 8L6.5 1.5L11.5 8Z M1.5 14.5L6.5 8L11.5 14.5Z" fill="#6e6e6e" stroke="#6e6e6e" stroke-width="1.5" stroke-linejoin="round"/><path d="M1.5 22.5L6.5 29L11.5 22.5Z M1.5 29L6.5 35.5L11.5 29Z" fill="#6e6e6e" stroke="#6e6e6e" stroke-width="1.5" stroke-linejoin="round"/></svg>
<svg style="position:absolute;left:1624px;top:179px;" width="17" height="11" viewBox="0 0 17 11"><polyline points="0.5,1 8.5,9 16.5,1" fill="none" stroke="#333" stroke-width="1.3"/></svg>
<svg style="position:absolute;left:1666px;top:176px;" width="14" height="14" viewBox="0 0 14 14"><path d="M1 1L13 13M13 1L1 13" stroke="#333" stroke-width="1.3"/></svg>
<div style="position:absolute;left:1253px;top:246.5px;width:440px;height:1px;background:#d5dde6;"></div>
<svg style="position:absolute;left:1275px;top:217px;" width="16" height="16" viewBox="0 0 16 16"><path d="M5 0H16V10.5A5.5 5.5 0 0 1 10.5 16H0V5A5 5 0 0 1 5 0Z" fill="#0b6cff"/><path d="M5 4.8H11M8 4.8V12" stroke="#fff" stroke-width="2"/></svg>
<div style="position:absolute;left:1312px;top:211.5px;width:192px;height:28px;background:#f1f4f8;border:1px solid #d6dde6;border-radius:5px;box-sizing:border-box;"></div>
<div style="position:absolute;left:1314px;top:213px;width:94px;height:25px;background:#4a6284;border-radius:4px;"></div>
<svg style="position:absolute;left:1318px;top:216px;" width="19" height="19" viewBox="0 0 19 19"><rect x="0.5" y="0.5" width="7.5" height="7.5" rx="2" fill="#fff"/><rect x="10" y="0" width="8" height="8" rx="2" transform="rotate(45 14 4)" fill="#fff"/><rect x="0.5" y="10.5" width="7.5" height="7.5" rx="2" fill="#fff"/><rect x="10.5" y="10.5" width="7.5" height="7.5" rx="2" fill="#fff"/></svg>
<div class="t" style="left:1342.0px;top:218.5px;font-size:16.3px;color:#fff;font-weight:700;">Content</div>
<svg style="position:absolute;left:1420px;top:215px;" width="22" height="20" viewBox="0 0 22 20"><path d="M8 6H1.5V13H8" fill="none" stroke="#3d4b5c" stroke-width="2.2"/><path d="M10 1.5H13.5M17 1.5H13.5V18.5H10M17 18.5H13.5M11 10H16" fill="none" stroke="#3d4b5c" stroke-width="2"/></svg>
<div class="t" style="left:1446.5px;top:217.5px;font-size:17.5px;color:#3d4b5c;">AI text</div>
<svg style="position:absolute;left:1670px;top:218px;" width="6" height="17" viewBox="0 0 6 17"><circle cx="3" cy="2" r="1.8" fill="#3d4b5c"/><circle cx="3" cy="8" r="1.8" fill="#3d4b5c"/><circle cx="3" cy="14" r="1.8" fill="#3d4b5c"/></svg>
<svg style="position:absolute;left:1286px;top:275px;" width="30" height="24" viewBox="0 0 30 24"><rect x="0" y="0" width="30" height="23" rx="2.5" fill="#2f4858"/><circle cx="9" cy="11.5" r="4.8" fill="#a9b8c8"/><path d="M16 9H25M16 12H25M16 15H21" stroke="#a9b8c8" stroke-width="1.6"/></svg>
<svg style="position:absolute;left:1408px;top:272px;" width="28" height="28" viewBox="0 0 28 28"><path d="M12 1A11 11 0 0 0 1 12H12Z" fill="#98a8bb"/><path d="M15 4A11.5 11.5 0 1 1 3.5 15.5H15Z" fill="#2f4858"/></svg>
<svg style="position:absolute;left:1584px;top:273px;" width="28" height="28" viewBox="0 0 28 28"><rect x="0" y="0" width="28" height="27" rx="2.5" fill="#2f4858"/><circle cx="9" cy="8" r="3" fill="#a9b8c8"/><path d="M4 22L11 13L15 18L18 15L24 22Z" fill="#a9b8c8"/></svg>
<svg style="position:absolute;left:1652px;top:298px;" width="13" height="18" viewBox="0 0 13 18"><path d="M2 2L10 9L2 16" fill="none" stroke="#444" stroke-width="2.6"/></svg>
<div class="t" style="left:1277.5px;top:316.6px;font-size:17px;color:#262626;-webkit-text-stroke:0.3px #262626;">Slides</div>
<div style="position:absolute;left:1277px;top:338px;width:47px;height:3.5px;background:#262626;border-radius:2px;"></div>
<div class="t" style="left:1365.5px;top:316.4px;font-size:17.3px;color:#3d4b5c;">Slide elements</div>
<div class="t" style="left:1522px;top:316.4px;font-size:17.3px;color:#3d4b5c;width:127px;overflow:hidden;-webkit-mask-image:linear-gradient(90deg,#000 80%,transparent);">Icons &amp; Illustrations</div>
<div style="position:absolute;left:1273px;top:345px;width:400px;height:456px;border:1px solid #d3dce5;box-sizing:border-box;background:#fff;"></div>
<div style="position:absolute;left:1273px;top:388px;width:400px;height:1px;background:#d3dce5;"></div>
<svg style="position:absolute;left:1287px;top:359px;" width="16" height="16" viewBox="0 0 16 16"><circle cx="6" cy="6" r="4.3" fill="none" stroke="#2f4858" stroke-width="2.3"/><path d="M9.2 9.2L13.5 13.5" stroke="#2f4858" stroke-width="2.6" stroke-linecap="round"/></svg>
<div class="t" style="left:1315.5px;top:357.3px;font-size:17.4px;color:#7d8894;">Search for slides</div>
<svg style="position:absolute;left:1643px;top:359px;" width="16" height="16" viewBox="0 0 16 16"><path d="M4 1V15M12 1V15" stroke="#2f4858" stroke-width="2"/><rect x="1.5" y="8" width="5" height="3" fill="#2f4858"/><rect x="9.5" y="4" width="5" height="3" fill="#2f4858"/></svg>
<svg style="position:absolute;left:1293px;top:410.5px;" width="30" height="25" viewBox="0 0 30 25"><path d="M1 2A2 2 0 0 1 3 0H11L13 2.5H28A2 2 0 0 1 30 4.5V23A2 2 0 0 1 28 25H3A2 2 0 0 1 1 23Z" fill="#9db1cb"/><path d="M1 3A2 2 0 0 1 3 0H11L13 2.5Z" fill="#8c8c8c"/></svg>
<div class="t" style="left:1343.0px;top:417.5px;font-size:17.5px;color:#3d4b5c;">Commercial</div>
<svg style="position:absolute;left:1638px;top:416px;" width="10" height="14" viewBox="0 0 10 14"><path d="M2 1.5L8 7L2 12.5" fill="none" stroke="#3d4b5c" stroke-width="2.3"/></svg>
<svg style="position:absolute;left:1293px;top:480.5px;" width="30" height="25" viewBox="0 0 30 25"><path d="M1 2A2 2 0 0 1 3 0H11L13 2.5H28A2 2 0 0 1 30 4.5V23A2 2 0 0 1 28 25H3A2 2 0 0 1 1 23Z" fill="#9db1cb"/><path d="M1 3A2 2 0 0 1 3 0H11L13 2.5Z" fill="#8c8c8c"/></svg>
<div class="t" style="left:1343.0px;top:486.8px;font-size:18px;color:#3d4b5c;">Global</div>
<svg style="position:absolute;left:1638px;top:486px;" width="10" height="14" viewBox="0 0 10 14"><path d="M2 1.5L8 7L2 12.5" fill="none" stroke="#3d4b5c" stroke-width="2.3"/></svg>
<div style="position:absolute;left:1273px;top:821px;width:400px;height:39.5px;background:#f6f8fa;border:1px solid #d6dde6;border-radius:4px;box-sizing:border-box;"></div>
<svg style="position:absolute;left:1407px;top:834px;" width="15" height="15" viewBox="0 0 15 15"><path d="M7.5 1V14M1 7.5H14" stroke="#2f4858" stroke-width="2.3"/></svg>
<div class="t" style="left:1435.5px;top:833.2px;font-size:17.5px;color:#3d4b5c;-webkit-text-stroke:0.25px #3d4b5c;">Find template</div>
<svg style="position:absolute;left:1330px;top:882px;" width="17" height="18" viewBox="0 0 17 18"><path d="M8.5 1V11M4 7L8.5 11.5L13 7" fill="none" stroke="#2f4858" stroke-width="2.3"/><path d="M1 16.5H16" stroke="#2f4858" stroke-width="2.3"/></svg>
<div class="t" style="left:1359.5px;top:883.4px;font-size:17px;color:#3d4b5c;">Save to...</div>
<div style="position:absolute;left:1486px;top:871px;width:1px;height:40px;background:#d6dde6;"></div>
<svg style="position:absolute;left:1544px;top:883px;" width="17" height="15" viewBox="0 0 17 15"><path d="M1 14C1 8 5 5 10 5V1L16 7L10 13V9C6 9 3 10 1 14Z" fill="#2f4858"/></svg>
<div class="t" style="left:1573.0px;top:883.4px;font-size:17px;color:#3d4b5c;">Share</div>
<svg style="position:absolute;left:1832px;top:179px;" width="17" height="11" viewBox="0 0 17 11"><polyline points="0.5,1 8.5,9 16.5,1" fill="none" stroke="#333" stroke-width="1.3"/></svg>
<svg style="position:absolute;left:1874px;top:176px;" width="14" height="14" viewBox="0 0 14 14"><path d="M1 1L13 13M13 1L1 13" stroke="#333" stroke-width="1.3"/></svg>
<svg style="position:absolute;left:1882px;top:223px;" width="6" height="16" viewBox="0 0 6 16"><circle cx="3" cy="2.0" r="1.7" fill="#666"/><circle cx="3" cy="7.5" r="1.7" fill="#666"/><circle cx="3" cy="13.0" r="1.7" fill="#666"/></svg>
<div style="position:absolute;left:1709px;top:250px;width:186px;height:1px;background:#dcdcdc;"></div>
<div style="position:absolute;left:1891px;top:251px;width:4px;height:680px;background:#f3f3f3;"></div>
<div style="position:absolute;left:1891px;top:251px;width:4px;height:496px;background:#d4d4d4;"></div>
<div style="position:absolute;left:1714px;top:256px;width:172px;height:18.5px;background:#f5f7fa;"></div>
<div class="t" style="left:1727.5px;top:257.1px;font-size:13.5px;color:#1a73e8;">Insert</div>
<div style="position:absolute;left:1714px;top:350px;width:172px;height:18.5px;background:#f5f7fa;"></div>
<div class="t" style="left:1727.5px;top:351.1px;font-size:13.5px;color:#1a73e8;">Outline</div>
<div style="position:absolute;left:1714px;top:416px;width:172px;height:18.5px;background:#f5f7fa;"></div>
<div class="t" style="left:1727.5px;top:417.1px;font-size:13.5px;color:#1a73e8;">Align</div>
<div style="position:absolute;left:1714px;top:537px;width:172px;height:18.5px;background:#f5f7fa;"></div>
<div class="t" style="left:1727.5px;top:538.1px;font-size:13.5px;color:#1a73e8;">Size</div>
<div style="position:absolute;left:1714px;top:630px;width:172px;height:18.5px;background:#f5f7fa;"></div>
<div class="t" style="left:1727.5px;top:631.1px;font-size:13.5px;color:#1a73e8;">Arrange</div>
<div style="position:absolute;left:1714px;top:696px;width:172px;height:18.5px;background:#f5f7fa;"></div>
<div class="t" style="left:1727.5px;top:697.1px;font-size:13.5px;color:#1a73e8;">Rotate</div>
<div style="position:absolute;left:1714px;top:762px;width:172px;height:18.5px;background:#f5f7fa;"></div>
<div class="t" style="left:1727.5px;top:763.1px;font-size:13.5px;color:#1a73e8;">Swap</div>
<div style="position:absolute;left:1714px;top:828px;width:172px;height:18.5px;background:#f5f7fa;"></div>
<div class="t" style="left:1727.5px;top:829.1px;font-size:13.5px;color:#1a73e8;">Text</div>
<div style="position:absolute;left:1714px;top:922px;width:172px;height:18.5px;background:#f5f7fa;"></div>
<div class="t" style="left:1727.5px;top:923.1px;font-size:13.5px;color:#1a73e8;">Picture</div>
<svg style="position:absolute;left:1722px;top:288px;" width="20" height="20" viewBox="0 0 20 20"><rect x="1" y="3" width="18" height="14" fill="none" stroke="#8a8a8a" stroke-width="1.2"/><text x="3" y="11.5" font-size="8" font-weight="bold" fill="#1a73e8" font-family="Liberation Sans">A</text><path d="M10 7H17M10 10H17M3 14H17" stroke="#8a8a8a" stroke-width="1"/></svg>
<svg style="position:absolute;left:1750px;top:288px;" width="20" height="20" viewBox="0 0 20 20"><rect x="2" y="3" width="16" height="14" fill="none" stroke="#444" stroke-width="1.2"/></svg>
<svg style="position:absolute;left:1777px;top:288px;" width="20" height="20" viewBox="0 0 20 20"><rect x="2" y="3" width="16" height="14" rx="3" fill="none" stroke="#444" stroke-width="1.2"/></svg>
<svg style="position:absolute;left:1805px;top:288px;" width="20" height="20" viewBox="0 0 20 20"><path d="M1 2H6L11 10L6 18H1L6 10Z M7 2H11L17 10L11 18H7L12 10Z" fill="none" stroke="#8a8a8a" stroke-width="1.1"/></svg>
<svg style="position:absolute;left:1832px;top:288px;" width="20" height="20" viewBox="0 0 20 20"><path d="M6 2L14 10L6 18Z" fill="none" stroke="#444" stroke-width="1.2"/></svg>
<svg style="position:absolute;left:1860px;top:288px;" width="20" height="20" viewBox="0 0 20 20"><ellipse cx="10" cy="10" rx="9" ry="7" fill="none" stroke="#444" stroke-width="1.2"/></svg>
<svg style="position:absolute;left:1722px;top:316px;" width="20" height="20" viewBox="0 0 20 20"><path d="M3 3L17 17" stroke="#6a5a5a" stroke-width="0.9"/><rect x="1" y="1" width="3" height="3" fill="none" stroke="#444" stroke-width="0.8"/><rect x="16" y="16" width="3" height="3" fill="none" stroke="#444" stroke-width="0.8"/></svg>
<svg style="position:absolute;left:1750px;top:316px;" width="20" height="20" viewBox="0 0 20 20"><path d="M3 3H8V17H17" fill="none" stroke="#6a5a5a" stroke-width="1"/><rect x="1" y="1" width="3" height="3" fill="none" stroke="#444" stroke-width="0.8"/><rect x="16" y="16" width="3" height="3" fill="none" stroke="#444" stroke-width="0.8"/></svg>
<div class="t" style="left:1778.5px;top:318.4px;font-size:19px;color:#666;">Ω</div>
<svg style="position:absolute;left:1805px;top:316px;" width="20" height="20" viewBox="0 0 20 20"><circle cx="10" cy="10" r="8.5" fill="#fff" stroke="#444" stroke-width="1.2"/><path d="M10 10V1.5A8.5 8.5 0 0 1 18.5 10Z" fill="#1a73e8"/></svg>
<svg style="position:absolute;left:1832px;top:316px;" width="20" height="20" viewBox="0 0 20 20"><path d="M4 1V7M1 4H7" stroke="#1a73e8" stroke-width="1.6"/><rect x="8" y="5" width="11" height="7" fill="#777"/><rect x="4" y="10" width="9" height="8" fill="#fff" stroke="#444" stroke-width="1.1"/></svg>
<svg style="position:absolute;left:1722px;top:382px;" width="20" height="20" viewBox="0 0 20 20"><path d="M1 5H19M1 10H19" stroke="#555" stroke-width="1.5"/><path d="M1 15.5H19" stroke="#555" stroke-width="2.5"/></svg>
<svg style="position:absolute;left:1750px;top:382px;" width="20" height="20" viewBox="0 0 20 20"><path d="M1 5H19" stroke="#777" stroke-width="1.3"/><path d="M1 10H19" stroke="#777" stroke-width="1.3" stroke-dasharray="2 1.5"/><path d="M1 15H19" stroke="#777" stroke-width="1.8" stroke-dasharray="4 2"/></svg>
<svg style="position:absolute;left:1777px;top:382px;" width="20" height="20" viewBox="0 0 20 20"><path d="M2 3.5H18M15 1L18 3.5L15 6M2 10H18M5 7.5L2 10L5 12.5M2 16.5H18M5 14L2 16.5L5 19M15 14L18 16.5L15 19" fill="none" stroke="#888" stroke-width="1.2"/></svg>
<svg style="position:absolute;left:1805px;top:382px;" width="20" height="20" viewBox="0 0 20 20"><path d="M7 3V17M13 3V17" stroke="#777" stroke-width="2"/></svg>
<svg style="position:absolute;left:1832px;top:382px;" width="20" height="20" viewBox="0 0 20 20"><path d="M3 7H17M3 13H17" stroke="#777" stroke-width="1.8"/></svg>
<svg style="position:absolute;left:1722px;top:447px;" width="20" height="20" viewBox="0 0 20 20"><path d="M3 2V18" stroke="#8a8a8a" stroke-width="1.2"/><rect x="5" y="4" width="10" height="4" fill="none" stroke="#8a8a8a"/><path d="M15 13H5M8 10L5 13L8 16" fill="none" stroke="#8a8a8a"/></svg>
<svg style="position:absolute;left:1750px;top:447px;" width="20" height="20" viewBox="0 0 20 20"><path d="M17 2V18" stroke="#8a8a8a" stroke-width="1.2"/><rect x="5" y="4" width="10" height="4" fill="none" stroke="#8a8a8a"/><path d="M5 13H15M12 10L15 13L12 16" fill="none" stroke="#8a8a8a"/></svg>
<svg style="position:absolute;left:1777px;top:447px;" width="20" height="20" viewBox="0 0 20 20"><path d="M1 3H19" stroke="#8a8a8a" stroke-width="1.2"/><rect x="2" y="5" width="4" height="10" fill="none" stroke="#8a8a8a"/><rect x="8" y="5" width="3" height="10" fill="none" stroke="#8a8a8a"/><path d="M15 15V6M12 9L15 6L18 9" fill="none" stroke="#8a8a8a"/></svg>
<svg style="position:absolute;left:1805px;top:447px;" width="20" height="20" viewBox="0 0 20 20"><path d="M10 1V19" stroke="#8a8a8a" stroke-width="1.2"/><rect x="5" y="4" width="10" height="5" fill="none" stroke="#8a8a8a"/><rect x="3" y="12" width="14" height="5" fill="none" stroke="#8a8a8a"/></svg>
<svg style="position:absolute;left:1832px;top:447px;" width="20" height="20" viewBox="0 0 20 20"><path d="M1 10H19" stroke="#8a8a8a" stroke-width="1.2"/><rect x="4" y="4" width="5" height="12" fill="none" stroke="#8a8a8a"/><rect x="11" y="6" width="5" height="8" fill="none" stroke="#8a8a8a"/></svg>
<svg style="position:absolute;left:1860px;top:447px;" width="20" height="20" viewBox="0 0 20 20"><path d="M1 17H19" stroke="#8a8a8a" stroke-width="1.2"/><rect x="2" y="4" width="4" height="11" fill="none" stroke="#8a8a8a"/><rect x="8" y="6" width="3" height="9" fill="none" stroke="#8a8a8a"/><path d="M15 5V14M12 11L15 14L18 11" fill="none" stroke="#8a8a8a"/></svg>
<svg style="position:absolute;left:1722px;top:475px;" width="20" height="20" viewBox="0 0 20 20"><rect x="2" y="4" width="5" height="12" fill="none" stroke="#8a8a8a"/><rect x="13" y="4" width="5" height="12" fill="none" stroke="#8a8a8a"/><path d="M7 10H13" stroke="#8a8a8a"/></svg>
<svg style="position:absolute;left:1750px;top:475px;" width="20" height="20" viewBox="0 0 20 20"><rect x="1" y="4" width="4" height="12" fill="none" stroke="#8a8a8a"/><rect x="8" y="4" width="4" height="12" fill="none" stroke="#8a8a8a"/><rect x="15" y="4" width="4" height="12" fill="none" stroke="#8a8a8a"/><path d="M5 10H8M12 10H15" stroke="#8a8a8a"/></svg>
<svg style="position:absolute;left:1777px;top:475px;" width="20" height="20" viewBox="0 0 20 20"><path d="M2 3V17M18 3V17" stroke="#8a8a8a" stroke-dasharray="2 1"/><rect x="6" y="4" width="8" height="12" fill="none" stroke="#8a8a8a"/></svg>
<svg style="position:absolute;left:1805px;top:475px;" width="20" height="20" viewBox="0 0 20 20"><rect x="4" y="2" width="12" height="5" fill="none" stroke="#8a8a8a"/><rect x="4" y="13" width="12" height="5" fill="none" stroke="#8a8a8a"/><path d="M10 7V13" stroke="#8a8a8a"/></svg>
<svg style="position:absolute;left:1832px;top:475px;" width="20" height="20" viewBox="0 0 20 20"><rect x="4" y="1" width="12" height="4" fill="none" stroke="#8a8a8a"/><rect x="4" y="8" width="12" height="4" fill="none" stroke="#8a8a8a"/><rect x="4" y="15" width="12" height="4" fill="none" stroke="#8a8a8a"/></svg>
<svg style="position:absolute;left:1860px;top:475px;" width="20" height="20" viewBox="0 0 20 20"><path d="M3 2H17M3 18H17" stroke="#8a8a8a" stroke-dasharray="2 1"/><rect x="4" y="6" width="12" height="8" fill="none" stroke="#8a8a8a"/></svg>
<svg style="position:absolute;left:1722px;top:502px;" width="20" height="20" viewBox="0 0 20 20"><path d="M2 3H11L14 7L11 11H2Z" fill="none" stroke="#8a8a8a"/><path d="M2 15H11L14 12" fill="none" stroke="#8a8a8a"/><path d="M16 10V18M13 15L16 18L19 15" fill="none" stroke="#8a8a8a"/></svg>
<svg style="position:absolute;left:1750px;top:502px;" width="20" height="20" viewBox="0 0 20 20"><rect x="1" y="1" width="18" height="18" fill="none" stroke="#8a8a8a"/><text x="4" y="11" font-size="9" fill="#555" font-family="Liberation Sans">A</text><path d="M12 12L17 17" stroke="#8a8a8a"/></svg>
<svg style="position:absolute;left:1777px;top:502px;" width="20" height="20" viewBox="0 0 20 20"><rect x="1" y="4" width="5" height="4" fill="none" stroke="#8a8a8a"/><rect x="8" y="4" width="5" height="4" fill="#8a8a8a"/><rect x="14" y="4" width="5" height="4" fill="#8a8a8a"/><path d="M11 9L17 17L13 16L11 19Z" fill="#fff" stroke="#555"/></svg>
<svg style="position:absolute;left:1722px;top:568.6px;" width="20" height="20" viewBox="0 0 20 20"><rect x="3" y="2" width="14" height="9" fill="none" stroke="#8a8a8a"/><path d="M2 15H18M5 12L2 15L5 18M15 12L18 15L15 18" fill="none" stroke="#8a8a8a"/></svg>
<svg style="position:absolute;left:1750px;top:568.6px;" width="20" height="20" viewBox="0 0 20 20"><rect x="2" y="3" width="12" height="14" fill="none" stroke="#8a8a8a"/><path d="M17 2V18M14 5L17 2L20 5M14 15L17 18L20 15" fill="none" stroke="#8a8a8a"/></svg>
<svg style="position:absolute;left:1777px;top:568.6px;" width="20" height="20" viewBox="0 0 20 20"><rect x="1" y="1" width="18" height="18" fill="none" stroke="#8a8a8a"/><path d="M10 3V17M3 10H17M7 6L10 3L13 6M7 14L10 17L13 14" fill="none" stroke="#8a8a8a"/></svg>
<svg style="position:absolute;left:1805px;top:568.6px;" width="20" height="20" viewBox="0 0 20 20"><rect x="3" y="2" width="14" height="6" fill="none" stroke="#8a8a8a" stroke-dasharray="2 1"/><path d="M4 14H9M7 12L4 14L7 16M16 14H11M13 12L16 14L13 16" fill="none" stroke="#8a8a8a"/></svg>
<svg style="position:absolute;left:1832px;top:568.6px;" width="20" height="20" viewBox="0 0 20 20"><rect x="3" y="2" width="14" height="6" fill="none" stroke="#8a8a8a" stroke-dasharray="2 1"/><path d="M3 14H8M6 12L8 14L6 16M17 14H12M14 12L12 14L14 16" fill="none" stroke="#8a8a8a"/></svg>
<svg style="position:absolute;left:1860px;top:568.6px;" width="20" height="20" viewBox="0 0 20 20"><rect x="1" y="4" width="5" height="12" fill="none" stroke="#8a8a8a"/><path d="M9 4H12" stroke="#8a8a8a" stroke-dasharray="1 1"/><path d="M16 14V4M13 7L16 4L19 7" fill="none" stroke="#8a8a8a"/></svg>
<svg style="position:absolute;left:1722px;top:597px;" width="20" height="20" viewBox="0 0 20 20"><rect x="1" y="3" width="5" height="12" fill="none" stroke="#8a8a8a"/><path d="M9 15H12" stroke="#8a8a8a" stroke-dasharray="1 1"/><path d="M16 3V13M13 10L16 13L19 10" fill="none" stroke="#8a8a8a"/></svg>
<svg style="position:absolute;left:1722px;top:662px;" width="20" height="20" viewBox="0 0 20 20"><rect x="4" y="4" width="12" height="12" fill="none" stroke="#8a8a8a" stroke-width="1.2"/><rect x="7" y="7" width="6" height="6" fill="none" stroke="#8a8a8a"/><rect x="1" y="1" width="4" height="4" fill="#8a8a8a"/><rect x="15" y="1" width="4" height="4" fill="#8a8a8a"/><rect x="1" y="15" width="4" height="4" fill="#8a8a8a"/><rect x="15" y="15" width="4" height="4" fill="#8a8a8a"/></svg>
<svg style="position:absolute;left:1750px;top:662px;" width="20" height="20" viewBox="0 0 20 20"><rect x="4" y="4" width="12" height="12" fill="none" stroke="#8a8a8a" stroke-width="1.2"/><rect x="1" y="1" width="4" height="4" fill="#8a8a8a"/><rect x="15" y="1" width="4" height="4" fill="#8a8a8a"/><rect x="1" y="15" width="4" height="4" fill="#8a8a8a"/><rect x="15" y="15" width="4" height="4" fill="#8a8a8a"/><path d="M6 6L9 9" stroke="#8a8a8a"/></svg>
<svg style="position:absolute;left:1777px;top:662px;" width="20" height="20" viewBox="0 0 20 20"><rect x="1" y="2" width="7" height="7" fill="none" stroke="#8a8a8a"/><rect x="5" y="6" width="8" height="8" fill="#8a8a8a"/><rect x="11" y="11" width="7" height="7" fill="#fff" stroke="#8a8a8a"/></svg>
<svg style="position:absolute;left:1805px;top:662px;" width="20" height="20" viewBox="0 0 20 20"><rect x="1" y="2" width="7" height="7" fill="none" stroke="#8a8a8a"/><rect x="5" y="5" width="11" height="11" fill="#8a8a8a"/><path d="M17 10V18H10" fill="none" stroke="#8a8a8a"/></svg>
<svg style="position:absolute;left:1832px;top:662px;" width="20" height="20" viewBox="0 0 20 20"><rect x="2" y="2" width="12" height="12" fill="#8a8a8a"/><rect x="8" y="8" width="10" height="10" fill="#fff" stroke="#8a8a8a" stroke-width="1.2"/></svg>
<svg style="position:absolute;left:1860px;top:662px;" width="20" height="20" viewBox="0 0 20 20"><rect x="1" y="1" width="14" height="14" fill="#8a8a8a"/><path d="M17 6V18H6" fill="none" stroke="#8a8a8a" stroke-width="1.2"/></svg>
<svg style="position:absolute;left:1722px;top:729px;" width="20" height="20" viewBox="0 0 20 20"><path d="M2 16L10 5V16Z" fill="#fff" stroke="#8a8a8a"/><path d="M10 5L18 16H10Z" fill="#8a8a8a"/><path d="M4 8A5 5 0 0 1 9 4" fill="none" stroke="#8a8a8a"/></svg>
<svg style="position:absolute;left:1750px;top:729px;" width="20" height="20" viewBox="0 0 20 20"><path d="M2 16L10 5V16Z" fill="#8a8a8a"/><path d="M10 5L18 16H10Z" fill="#fff" stroke="#8a8a8a"/><path d="M11 4A5 5 0 0 1 16 8" fill="none" stroke="#8a8a8a"/></svg>
<svg style="position:absolute;left:1777px;top:729px;" width="20" height="20" viewBox="0 0 20 20"><path d="M16 2L4 9H16Z" fill="#fff" stroke="#8a8a8a"/><path d="M4 11L16 18V11Z" fill="#8a8a8a"/></svg>
<svg style="position:absolute;left:1805px;top:729px;" width="20" height="20" viewBox="0 0 20 20"><path d="M9 4L2 16H9Z" fill="#8a8a8a"/><path d="M11 4L18 16H11Z" fill="#fff" stroke="#8a8a8a"/></svg>
<svg style="position:absolute;left:1832px;top:729px;" width="20" height="20" viewBox="0 0 20 20"><circle cx="4" cy="10" r="1.3" fill="#555"/><circle cx="10" cy="10" r="1.3" fill="#555"/><circle cx="16" cy="10" r="1.3" fill="#555"/></svg>
<svg style="position:absolute;left:1722px;top:793.5px;" width="20" height="20" viewBox="0 0 20 20"><rect x="1" y="2" width="4" height="4" fill="none" stroke="#8a8a8a"/><path d="M5 4H13V15M10 12L13 15L16 12" fill="none" stroke="#8a8a8a"/><rect x="11" y="16" width="4" height="3" fill="none" stroke="#8a8a8a"/></svg>
<svg style="position:absolute;left:1750px;top:793.5px;" width="20" height="20" viewBox="0 0 20 20"><path d="M2 3V17M18 3V17" stroke="#8a8a8a" stroke-width="1.3"/><rect x="4" y="4" width="3" height="12" fill="none" stroke="#8a8a8a"/><path d="M7 10H13M10 8L13 10L10 12" fill="none" stroke="#8a8a8a"/></svg>
<svg style="position:absolute;left:1777px;top:793.5px;" width="20" height="20" viewBox="0 0 20 20"><path d="M3 2H17M3 18H17" stroke="#8a8a8a" stroke-width="1.3"/><rect x="5" y="13" width="10" height="3" fill="none" stroke="#8a8a8a"/><path d="M10 4V12M8 6L10 4L12 6M8 10L10 12L12 10" fill="none" stroke="#8a8a8a"/></svg>
<svg style="position:absolute;left:1722px;top:860px;" width="20" height="20" viewBox="0 0 20 20"><rect x="1" y="1" width="18" height="18" fill="none" stroke="#8a8a8a"/><text x="3" y="10" font-size="8" fill="#555" font-family="Liberation Sans">A</text><path d="M9 6H17M9 9H17" stroke="#8a8a8a"/><path d="M6 16L15 11L17 14L8 19Z" fill="#1a73e8"/></svg>
<svg style="position:absolute;left:1750px;top:860px;" width="20" height="20" viewBox="0 0 20 20"><rect x="1" y="1" width="18" height="18" fill="none" stroke="#8a8a8a"/><rect x="3" y="3" width="14" height="14" fill="none" stroke="#8a8a8a"/><text x="5" y="15" font-size="12" fill="#555" font-family="Liberation Sans">A</text></svg>
<svg style="position:absolute;left:1777px;top:860px;" width="20" height="20" viewBox="0 0 20 20"><rect x="1" y="1" width="18" height="18" fill="none" stroke="#8a8a8a"/><text x="6" y="10" font-size="9" fill="#555" font-family="Liberation Sans">A</text><path d="M10 18V11M7 14L10 11L13 14" fill="none" stroke="#8a8a8a"/></svg>
<svg style="position:absolute;left:1805px;top:860px;" width="20" height="20" viewBox="0 0 20 20"><text x="1" y="9" font-size="9" fill="#777" font-family="Liberation Sans">ab</text><text x="1" y="18" font-size="9" fill="#777" font-family="Liberation Sans">c</text><path d="M17 11V15H9M11 13L9 15L11 17" fill="none" stroke="#8a8a8a"/></svg>
<svg style="position:absolute;left:1832px;top:860px;" width="20" height="20" viewBox="0 0 20 20"><path d="M9 4H19M9 10H19M9 16H19" stroke="#8a8a8a" stroke-width="1.3"/><path d="M4 2V8M2 5L4 2L6 5M4 18V12M2 15L4 18L6 15" fill="none" stroke="#8a8a8a"/></svg>
<svg style="position:absolute;left:1860px;top:860px;" width="20" height="20" viewBox="0 0 20 20"><path d="M9 4H19M9 10H19M9 16H19" stroke="#8a8a8a" stroke-width="1.3"/><path d="M4 2V8M2 6L4 8L6 6M4 18V12M2 14L4 12L6 14" fill="none" stroke="#8a8a8a"/></svg>
<svg style="position:absolute;left:1722px;top:888px;" width="20" height="20" viewBox="0 0 20 20"><rect x="1" y="1" width="18" height="16" fill="none" stroke="#8a8a8a"/><path d="M3 3L17 15M17 3L3 15M4 6H16M4 9H16" stroke="#8a8a8a" stroke-width="0.8"/><circle cx="16" cy="17" r="2" fill="#fff" stroke="#8a8a8a"/></svg>
<svg style="position:absolute;left:1750px;top:888px;" width="20" height="20" viewBox="0 0 20 20"><rect x="1" y="1" width="18" height="16" fill="none" stroke="#8a8a8a"/><path d="M4 6H16M4 9H16M4 12H16" stroke="#8a8a8a" stroke-width="0.8"/><path d="M5 4L17 17" stroke="#555" stroke-width="2.2"/></svg>
<svg style="position:absolute;left:1777px;top:888px;" width="20" height="20" viewBox="0 0 20 20"><rect x="1" y="1" width="18" height="16" fill="none" stroke="#8a8a8a"/><path d="M3 3L17 15M17 3L3 15M4 6H16M4 9H16M4 12H16" stroke="#8a8a8a" stroke-width="0.8"/><circle cx="16" cy="17" r="2" fill="#fff" stroke="#8a8a8a"/></svg>
<svg style="position:absolute;left:1805px;top:888px;" width="20" height="20" viewBox="0 0 20 20"><text x="1" y="8" font-size="8" fill="#777" font-family="Liberation Sans">A</text><text x="10" y="18" font-size="8" fill="#777" font-family="Liberation Sans">B</text><path d="M6 5H13V12M11 10L13 12L15 10" fill="none" stroke="#8a8a8a"/></svg>
<svg style="position:absolute;left:1832px;top:888px;" width="20" height="20" viewBox="0 0 20 20"><text x="1" y="18" font-size="16" font-weight="bold" fill="#444" font-family="Liberation Sans">x</text><text x="11" y="7" font-size="7" fill="#1a73e8" font-family="Liberation Sans">(a)</text></svg>
<svg style="position:absolute;left:1860px;top:888px;" width="20" height="20" viewBox="0 0 20 20"><circle cx="7" cy="7" r="5.5" fill="none" stroke="#1a73e8" stroke-width="1.3"/><path d="M1.5 7H12.5M7 1.5V12.5" stroke="#1a73e8" stroke-width="0.9"/><rect x="8" y="9" width="11" height="9" fill="#fff" stroke="#8a8a8a"/><path d="M10 14L13 17L19 10" fill="none" stroke="#1a73e8" stroke-width="1.6"/></svg>
</div></body></html>
